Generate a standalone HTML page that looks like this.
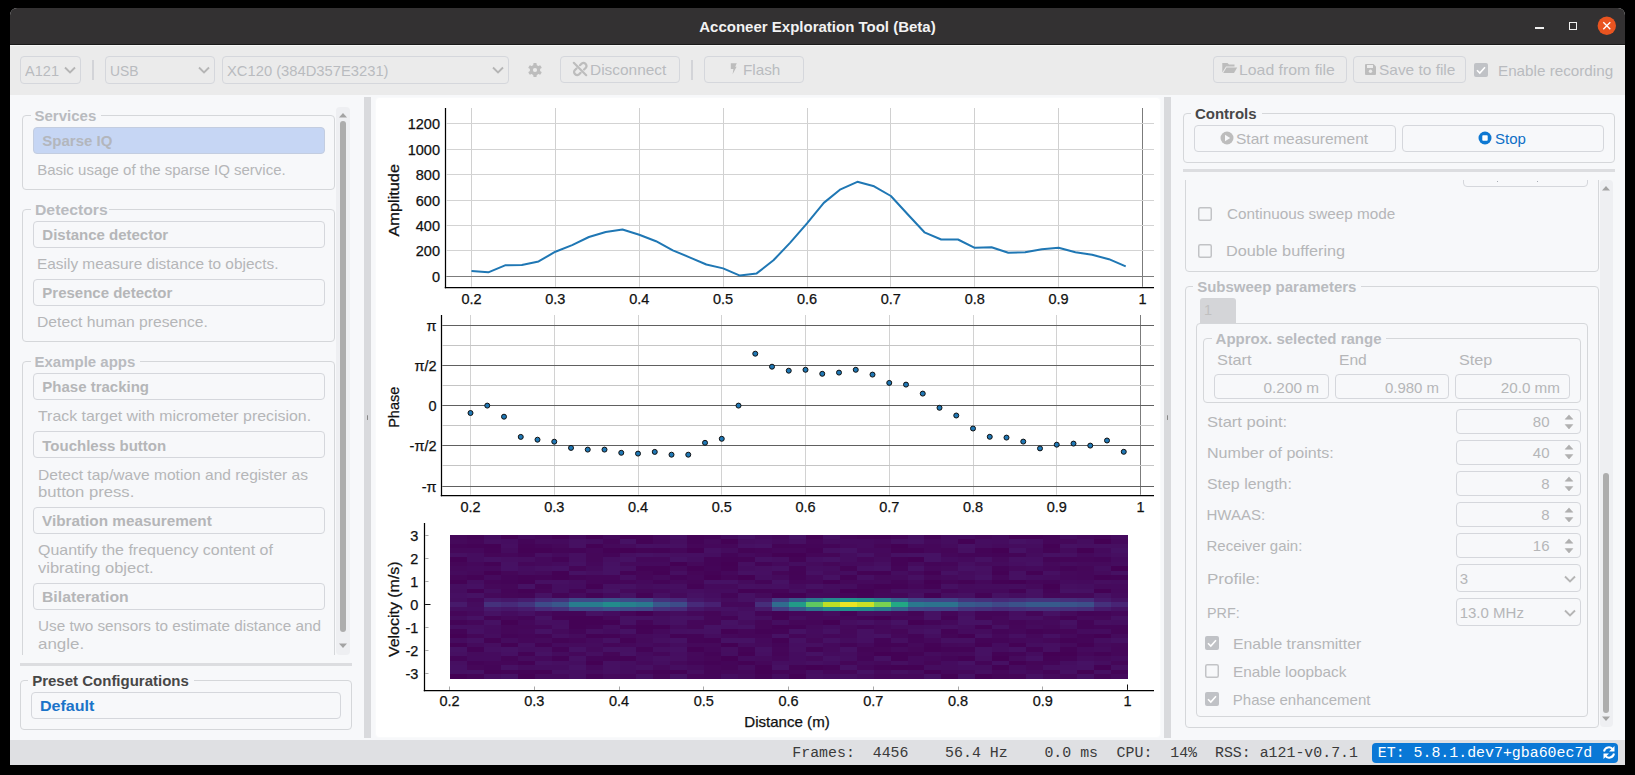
<!DOCTYPE html>
<html><head><meta charset="utf-8"><style>
html,body{margin:0;padding:0;width:1635px;height:775px;overflow:hidden;background:#000}
body>div,body>svg,body div div,body div svg{position:absolute}
body div div div{position:absolute}
</style></head><body>
<div style="left:10px;top:8px;width:1615px;height:757px;background:#f7f8fa;border-radius:7px 7px 0 0;overflow:hidden"></div>
<div style="left:10px;top:8px;width:1615px;height:36px;background:#333132;border-radius:7px 7px 0 0"></div>
<div style="left:10px;top:44px;width:1615px;height:1px;background:#1a1a1a"></div>
<div style="left:617.5px;width:400px;text-align:center;top:19.27px;font:bold 15px/15px 'Liberation Sans', sans-serif;color:#f2f2f2;white-space:pre;">Acconeer Exploration Tool (Beta)</div>
<div style="left:1535px;top:27.3px;width:9px;height:1.7px;background:#f0f0f0"></div>
<div style="left:1569px;top:22px;width:8px;height:8px;border:1.5px solid #f0f0f0;box-sizing:border-box"></div>
<svg style="left:1597px;top:16px" width="20" height="20" viewBox="0 0 20 20"><circle cx="9.8" cy="9.8" r="9.2" fill="#e95420"/><path d="M6.3 6.3L13.3 13.3M13.3 6.3L6.3 13.3" stroke="#fff" stroke-width="1.35"/></svg>
<div style="left:10px;top:45px;width:1615px;height:49.5px;background:#ebebeb;border-top:1px solid #f7f7f7;box-sizing:border-box"></div>
<div style="left:20px;top:56px;width:61px;height:28px;border:1px solid #d5d7dc;border-radius:4px;box-sizing:border-box;"></div>
<div style="left:24.6px;top:63.37px;font:normal 15px/15px 'Liberation Sans', sans-serif;color:#b9bbbf;white-space:pre;transform:scaleX(0.97);transform-origin:0 50%;">A121</div>
<svg style="left:62.7px;top:65px" width="14" height="10" viewBox="0 0 14 10"><path d="M2 2.5 L7 7.5 L12 2.5" fill="none" stroke="#b5b5b5" stroke-width="1.9"/></svg>
<div style="left:92px;top:60px;width:1.5px;height:20px;background:#d3d4d8"></div>
<div style="left:105px;top:56px;width:110px;height:28px;border:1px solid #d5d7dc;border-radius:4px;box-sizing:border-box;"></div>
<div style="left:110.3px;top:63.37px;font:normal 15px/15px 'Liberation Sans', sans-serif;color:#b9bbbf;white-space:pre;transform:scaleX(0.925);transform-origin:0 50%;">USB</div>
<svg style="left:196.5px;top:65px" width="14" height="10" viewBox="0 0 14 10"><path d="M2 2.5 L7 7.5 L12 2.5" fill="none" stroke="#b5b5b5" stroke-width="1.9"/></svg>
<div style="left:222px;top:56px;width:287px;height:28px;border:1px solid #d5d7dc;border-radius:4px;box-sizing:border-box;"></div>
<div style="left:227.3px;top:63.37px;font:normal 15px/15px 'Liberation Sans', sans-serif;color:#b9bbbf;white-space:pre;transform:scaleX(0.983);transform-origin:0 50%;">XC120 (384D357E3231)</div>
<svg style="left:490.5px;top:65px" width="14" height="10" viewBox="0 0 14 10"><path d="M2 2.5 L7 7.5 L12 2.5" fill="none" stroke="#b5b5b5" stroke-width="1.9"/></svg>
<svg style="left:527px;top:62px" width="16" height="16" viewBox="-8 -8 16 16"><g fill="#bdbdbd"><rect x="-1.7" y="-7" width="3.4" height="4" rx="0.8" transform="rotate(0)"/><rect x="-1.7" y="-7" width="3.4" height="4" rx="0.8" transform="rotate(60)"/><rect x="-1.7" y="-7" width="3.4" height="4" rx="0.8" transform="rotate(120)"/><rect x="-1.7" y="-7" width="3.4" height="4" rx="0.8" transform="rotate(180)"/><rect x="-1.7" y="-7" width="3.4" height="4" rx="0.8" transform="rotate(240)"/><rect x="-1.7" y="-7" width="3.4" height="4" rx="0.8" transform="rotate(300)"/><circle r="5.2"/></g><circle r="2.1" fill="#ebebeb"/></svg>
<div style="left:560px;top:56px;width:120px;height:27px;border:1px solid #d5d7dc;border-radius:4px;box-sizing:border-box;"></div>
<svg style="left:572px;top:61px" width="16" height="16" viewBox="0 0 16 16"><g fill="none" stroke="#bdbdbd" stroke-width="2.2" stroke-linecap="round"><path d="M4.5 7.5 L2.8 9.2 A3 3 0 0 0 7.0 13.4 L8.6 11.8"/><path d="M8.0 4.2 L9.6 2.6 A3 3 0 0 1 13.8 6.8 L12.1 8.5"/><path d="M1.8 1.8 L14.2 14.2"/></g></svg>
<div style="left:589.8px;top:62.47px;font:normal 15px/15px 'Liberation Sans', sans-serif;color:#b9bbbf;white-space:pre;transform:scaleX(1.028);transform-origin:0 50%;">Disconnect</div>
<div style="left:691.3px;top:60px;width:1.5px;height:20px;background:#d3d4d8"></div>
<div style="left:704px;top:56px;width:100px;height:27px;border:1px solid #d5d7dc;border-radius:4px;box-sizing:border-box;"></div>
<svg style="left:730px;top:62.5px" width="8" height="12" viewBox="0 0 8 12"><path d="M0.8 0.3 H6.8 L5.2 3.8 H6.6 L2.6 11.3 L3.4 6 H0.8 Z" fill="#bdbdbd"/></svg>
<div style="left:742.7px;top:62.47px;font:normal 15px/15px 'Liberation Sans', sans-serif;color:#b9bbbf;white-space:pre;transform:scaleX(1.018);transform-origin:0 50%;">Flash</div>
<div style="left:1213px;top:56px;width:134px;height:27px;border:1px solid #d5d7dc;border-radius:4px;box-sizing:border-box;"></div>
<svg style="left:1222px;top:62px" width="16" height="13" viewBox="0 0 16 13"><path d="M0.3 1 H5.5 L7 2.5 H12.5 V4.5 H4 L0.3 10.5 Z" fill="#bdbdbd"/><path d="M4.5 5.5 H15.2 L12 11 H1.2 Z" fill="#bdbdbd"/></svg>
<div style="left:1239.4px;top:62.47px;font:normal 15px/15px 'Liberation Sans', sans-serif;color:#b9bbbf;white-space:pre;transform:scaleX(1.055);transform-origin:0 50%;">Load from file</div>
<div style="left:1353px;top:56px;width:113px;height:27px;border:1px solid #d5d7dc;border-radius:4px;box-sizing:border-box;"></div>
<svg style="left:1364.5px;top:63.5px" width="11" height="11" viewBox="0 0 11 11"><path d="M0 1 A1 1 0 0 1 1 0 H8.5 L11 2.5 V10 A1 1 0 0 1 10 11 H1 A1 1 0 0 1 0 10 Z" fill="#bdbdbd"/><rect x="2" y="1" width="6" height="3" fill="#ebebeb"/><circle cx="5.5" cy="7.3" r="1.7" fill="#ebebeb"/></svg>
<div style="left:1379.3px;top:62.47px;font:normal 15px/15px 'Liberation Sans', sans-serif;color:#b9bbbf;white-space:pre;transform:scaleX(1.029);transform-origin:0 50%;">Save to file</div>
<svg style="left:1474px;top:63px" width="14" height="14" viewBox="0 0 14 14"><rect x="0" y="0" width="14" height="14" rx="2" fill="#c0c2c6"/><path d="M3 7.2 L5.8 10 L11 4.2" fill="none" stroke="#fff" stroke-width="1.6"/></svg>
<div style="left:1498.3px;top:62.97px;font:normal 15px/15px 'Liberation Sans', sans-serif;color:#b9bbbf;white-space:pre;transform:scaleX(1.015);transform-origin:0 50%;">Enable recording</div>
<div style="left:364px;top:97px;width:7px;height:641px;background:#d9dadd"></div>
<div style="left:1164px;top:97px;width:7px;height:641px;background:#d9dadd"></div>
<div style="left:367px;top:415px;width:1.2px;height:5px;background:#888;border-radius:1px"></div>
<div style="left:1167px;top:415px;width:1.2px;height:5px;background:#888;border-radius:1px"></div>
<div style="left:10px;top:739.5px;width:1615px;height:25.5px;background:#dfe0e3"></div>
<div style="left:792.3px;top:746.00px;font:normal 14.9px/14.9px 'Liberation Mono', monospace;color:#3a3a3a;white-space:pre;">Frames:  4456</div>
<div style="left:945.1px;top:746.00px;font:normal 14.9px/14.9px 'Liberation Mono', monospace;color:#3a3a3a;white-space:pre;">56.4 Hz</div>
<div style="left:1044.4px;top:746.00px;font:normal 14.9px/14.9px 'Liberation Mono', monospace;color:#3a3a3a;white-space:pre;">0.0 ms</div>
<div style="left:1116.6px;top:746.00px;font:normal 14.9px/14.9px 'Liberation Mono', monospace;color:#3a3a3a;white-space:pre;">CPU:  14%</div>
<div style="left:1215px;top:746.00px;font:normal 14.9px/14.9px 'Liberation Mono', monospace;color:#3a3a3a;white-space:pre;">RSS: a121-v0.7.1</div>
<div style="left:1372px;top:743px;width:246px;height:19.7px;background:#0a78d6;border-radius:4px"></div>
<div style="left:1377.8px;top:746.00px;font:normal 14.9px/14.9px 'Liberation Mono', monospace;color:#ffffff;white-space:pre;">ET: 5.8.1.dev7+gba60ec7d</div>
<svg style="left:1602px;top:745px" width="14" height="15" viewBox="0 0 14 15"><g fill="none" stroke="#fff" stroke-width="2"><path d="M2 6.5 A5 5 0 0 1 11 4.5"/><path d="M12 8.5 A5 5 0 0 1 3 10.5"/></g><path d="M12.5 1 V6.5 H7 Z" fill="#fff"/><path d="M1.5 14 V8.5 H7 Z" fill="#fff"/></svg>
<div style="left:10px;top:95px;width:354px;height:560px;overflow:hidden">
<div style="position:relative;left:-10px;top:-95px;width:1635px;height:775px">
<div style="left:22px;top:115px;width:313px;height:75px;border:1px solid #d5d7da;border-radius:4px;box-sizing:border-box;"></div>
<div style="left:30.5px;top:107px;height:16px;background:#f7f8fa;font:bold 15px/16px 'Liberation Sans', sans-serif;color:transparent;padding:0 5px 0 4px;white-space:pre">Services</div>
<div style="left:34.5px;top:108.27px;font:bold 15px/15px 'Liberation Sans', sans-serif;color:#b9bbbf;white-space:pre;">Services</div>
<div style="left:33px;top:127px;width:292px;height:27px;border:1px solid #d5d7dc;border-radius:4px;box-sizing:border-box;background:#c6d6f4;border-color:#c3cde0"></div>
<div style="left:42.3px;top:133.27px;font:bold 15px/15px 'Liberation Sans', sans-serif;color:#b3b6bd;white-space:pre;">Sparse IQ</div>
<div style="left:37.2px;top:162.47px;font:normal 15px/15px 'Liberation Sans', sans-serif;color:#b5b6b8;white-space:pre;">Basic usage of the sparse IQ service.</div>
<div style="left:22px;top:209px;width:313px;height:133px;border:1px solid #d5d7da;border-radius:4px;box-sizing:border-box;"></div>
<div style="left:30.5px;top:201px;height:16px;background:#f7f8fa;font:bold 15px/16px 'Liberation Sans', sans-serif;color:transparent;padding:0 5px 0 4px;white-space:pre">Detectors</div>
<div style="left:34.5px;top:202.27px;font:bold 15px/15px 'Liberation Sans', sans-serif;color:#b9bbbf;white-space:pre;transform:scaleX(1.05);transform-origin:0 50%;">Detectors</div>
<div style="left:33px;top:221px;width:292px;height:27px;border:1px solid #d5d7dc;border-radius:4px;box-sizing:border-box;"></div>
<div style="left:42.3px;top:227.27px;font:bold 15px/15px 'Liberation Sans', sans-serif;color:#b5b6b8;white-space:pre;">Distance detector</div>
<div style="left:37.4px;top:256.27px;font:normal 15px/15px 'Liberation Sans', sans-serif;color:#b5b6b8;white-space:pre;transform:scaleX(1.027);transform-origin:0 50%;">Easily measure distance to objects.</div>
<div style="left:33px;top:279px;width:292px;height:27px;border:1px solid #d5d7dc;border-radius:4px;box-sizing:border-box;"></div>
<div style="left:42.3px;top:285.27px;font:bold 15px/15px 'Liberation Sans', sans-serif;color:#b5b6b8;white-space:pre;">Presence detector</div>
<div style="left:37.4px;top:314.37px;font:normal 15px/15px 'Liberation Sans', sans-serif;color:#b5b6b8;white-space:pre;transform:scaleX(1.046);transform-origin:0 50%;">Detect human presence.</div>
<div style="left:22px;top:361px;width:313px;height:321px;border:1px solid #d5d7da;border-radius:4px;box-sizing:border-box;"></div>
<div style="left:30.5px;top:353px;height:16px;background:#f7f8fa;font:bold 15px/16px 'Liberation Sans', sans-serif;color:transparent;padding:0 5px 0 4px;white-space:pre">Example apps</div>
<div style="left:34.5px;top:354.27px;font:bold 15px/15px 'Liberation Sans', sans-serif;color:#b9bbbf;white-space:pre;">Example apps</div>
<div style="left:33px;top:373px;width:292px;height:27px;border:1px solid #d5d7dc;border-radius:4px;box-sizing:border-box;"></div>
<div style="left:42.3px;top:379.47px;font:bold 15px/15px 'Liberation Sans', sans-serif;color:#b5b6b8;white-space:pre;">Phase tracking</div>
<div style="left:37.6px;top:408.47px;font:normal 15px/15px 'Liberation Sans', sans-serif;color:#b5b6b8;white-space:pre;transform:scaleX(1.059);transform-origin:0 50%;">Track target with micrometer precision.</div>
<div style="left:33px;top:431px;width:292px;height:27px;border:1px solid #d5d7dc;border-radius:4px;box-sizing:border-box;"></div>
<div style="left:42.3px;top:437.57px;font:bold 15px/15px 'Liberation Sans', sans-serif;color:#b5b6b8;white-space:pre;">Touchless button</div>
<div style="left:37.6px;top:466.57px;font:normal 15px/15px 'Liberation Sans', sans-serif;color:#b5b6b8;white-space:pre;transform:scaleX(1.038);transform-origin:0 50%;">Detect tap/wave motion and register as</div>
<div style="left:37.6px;top:484.47px;font:normal 15px/15px 'Liberation Sans', sans-serif;color:#b5b6b8;white-space:pre;transform:scaleX(1.11);transform-origin:0 50%;">button press.</div>
<div style="left:33px;top:507px;width:292px;height:27px;border:1px solid #d5d7dc;border-radius:4px;box-sizing:border-box;"></div>
<div style="left:42.3px;top:513.37px;font:bold 15px/15px 'Liberation Sans', sans-serif;color:#b5b6b8;white-space:pre;transform:scaleX(1.02);transform-origin:0 50%;">Vibration measurement</div>
<div style="left:37.6px;top:542.37px;font:normal 15px/15px 'Liberation Sans', sans-serif;color:#b5b6b8;white-space:pre;transform:scaleX(1.063);transform-origin:0 50%;">Quantify the frequency content of</div>
<div style="left:37.6px;top:560.27px;font:normal 15px/15px 'Liberation Sans', sans-serif;color:#b5b6b8;white-space:pre;transform:scaleX(1.1);transform-origin:0 50%;">vibrating object.</div>
<div style="left:33px;top:583px;width:292px;height:27px;border:1px solid #d5d7dc;border-radius:4px;box-sizing:border-box;"></div>
<div style="left:42.3px;top:589.17px;font:bold 15px/15px 'Liberation Sans', sans-serif;color:#b5b6b8;white-space:pre;transform:scaleX(1.05);transform-origin:0 50%;">Bilateration</div>
<div style="left:37.6px;top:618.17px;font:normal 15px/15px 'Liberation Sans', sans-serif;color:#b5b6b8;white-space:pre;transform:scaleX(1.019);transform-origin:0 50%;">Use two sensors to estimate distance and</div>
<div style="left:37.6px;top:636.07px;font:normal 15px/15px 'Liberation Sans', sans-serif;color:#b5b6b8;white-space:pre;transform:scaleX(1.13);transform-origin:0 50%;">angle.</div>
</div></div>
<div style="left:336px;top:107px;width:13.5px;height:548px;background:#eeeff2;border-radius:4px"></div>
<svg style="left:337.8px;top:111px" width="10" height="8" viewBox="0 0 10 8"><path d="M1 6.5 L5 2 L9 6.5 Z" fill="#a3a3a3"/></svg>
<div style="left:340px;top:121px;width:5.8px;height:510.5px;background:#adadad;border-radius:3px"></div>
<svg style="left:338px;top:642px" width="10" height="8" viewBox="0 0 10 8"><path d="M1 1.5 L5 6 L9 1.5 Z" fill="#a3a3a3"/></svg>
<div style="left:20px;top:663px;width:332px;height:2.5px;background:#dcdde0"></div>
<div style="left:20px;top:680px;width:332px;height:50px;border:1px solid #d5d7da;border-radius:4px;box-sizing:border-box;"></div>
<div style="left:28.200000000000003px;top:672px;height:16px;background:#f7f8fa;font:bold 15px/16px 'Liberation Sans', sans-serif;color:transparent;padding:0 5px 0 4px;white-space:pre">Preset Configurations</div>
<div style="left:32.2px;top:673.27px;font:bold 15px/15px 'Liberation Sans', sans-serif;color:#474747;white-space:pre;">Preset Configurations</div>
<div style="left:31px;top:692px;width:310px;height:27px;border:1px solid #d5d7dc;border-radius:4px;box-sizing:border-box;"></div>
<div style="left:40.4px;top:698.27px;font:bold 15px/15px 'Liberation Sans', sans-serif;color:#1a73c9;white-space:pre;transform:scaleX(1.07);transform-origin:0 50%;">Default</div>
<div style="left:1183px;top:113px;width:432px;height:50px;border:1px solid #d5d7da;border-radius:4px;box-sizing:border-box;"></div>
<div style="left:1190.9px;top:105px;height:16px;background:#f7f8fa;font:bold 15px/16px 'Liberation Sans', sans-serif;color:transparent;padding:0 5px 0 4px;white-space:pre">Controls</div>
<div style="left:1194.9px;top:106.27px;font:bold 15px/15px 'Liberation Sans', sans-serif;color:#474747;white-space:pre;">Controls</div>
<div style="left:1194px;top:125px;width:202px;height:27px;border:1px solid #d5d7dc;border-radius:4px;box-sizing:border-box;"></div>
<svg style="left:1219.5px;top:131px" width="14" height="14" viewBox="0 0 14 14"><circle cx="7" cy="7" r="6.5" fill="#bdbdbd"/><path d="M5 3.8 L10.2 7 L5 10.2 Z" fill="#f7f8fa"/></svg>
<div style="left:1235.5px;top:131.27px;font:normal 15px/15px 'Liberation Sans', sans-serif;color:#b5b6b8;white-space:pre;transform:scaleX(1.036);transform-origin:0 50%;">Start measurement</div>
<div style="left:1402px;top:125px;width:202px;height:27px;border:1px solid #d5d7dc;border-radius:4px;box-sizing:border-box;"></div>
<svg style="left:1477.5px;top:130.5px" width="14" height="14" viewBox="0 0 14 14"><circle cx="7" cy="7" r="6.5" fill="#0e78d2"/><rect x="4.3" y="4.3" width="5.4" height="5.4" rx="0.8" fill="#fff"/></svg>
<div style="left:1495px;top:131.27px;font:normal 15px/15px 'Liberation Sans', sans-serif;color:#0e6fc6;white-space:pre;">Stop</div>
<div style="left:1183px;top:169px;width:432px;height:3px;background:#dcdde0"></div>
<div style="left:1171px;top:180px;width:428px;height:548px;overflow:hidden">
<div style="position:relative;left:-1171px;top:-180px;width:1635px;height:775px">
<div style="left:1185px;top:100px;width:414px;height:171.5px;border:1px solid #d5d7da;border-radius:4px;box-sizing:border-box"></div>
<div style="left:1497px;top:181px;width:1px;height:1px;background:#a8acb4"></div>
<div style="left:1537px;top:181px;width:1px;height:1px;background:#a8acb4"></div>
<div style="left:1463px;top:150px;width:125px;height:37px;border:1px solid #d5d7dc;border-radius:4px;box-sizing:border-box;"></div>
<svg style="left:1198px;top:206.5px" width="14" height="14" viewBox="0 0 14 14"><rect x="0.75" y="0.75" width="12.5" height="12.5" rx="1.5" fill="none" stroke="#c2c3c6" stroke-width="1.5"/></svg>
<div style="left:1226.6px;top:206.47px;font:normal 15px/15px 'Liberation Sans', sans-serif;color:#b5b6b8;white-space:pre;transform:scaleX(1.019);transform-origin:0 50%;">Continuous sweep mode</div>
<svg style="left:1198px;top:243.5px" width="14" height="14" viewBox="0 0 14 14"><rect x="0.75" y="0.75" width="12.5" height="12.5" rx="1.5" fill="none" stroke="#c2c3c6" stroke-width="1.5"/></svg>
<div style="left:1225.9px;top:243.27px;font:normal 15px/15px 'Liberation Sans', sans-serif;color:#b5b6b8;white-space:pre;transform:scaleX(1.085);transform-origin:0 50%;">Double buffering</div>
<div style="left:1185px;top:286px;width:414px;height:442px;border:1px solid #d5d7da;border-radius:4px;box-sizing:border-box;"></div>
<div style="left:1193.2px;top:278px;height:16px;background:#f7f8fa;font:bold 15px/16px 'Liberation Sans', sans-serif;color:transparent;padding:0 5px 0 4px;white-space:pre">Subsweep parameters</div>
<div style="left:1197.2px;top:279.27px;font:bold 15px/15px 'Liberation Sans', sans-serif;color:#b9bbbf;white-space:pre;">Subsweep parameters</div>
<div style="left:1200px;top:298.1px;width:36px;height:25.5px;background:#d4d5d8;border-radius:3px 3px 0 0"></div>
<div style="left:1204px;top:303.01px;font:normal 14.5px/14.5px 'Liberation Sans', sans-serif;color:#c0c0c0;white-space:pre;">1</div>
<div style="left:1196px;top:323px;width:392px;height:394px;border:1px solid #d5d7da;border-radius:4px;box-sizing:border-box"></div>
<div style="left:1203px;top:338px;width:378px;height:65px;border:1px solid #d5d7da;border-radius:4px;box-sizing:border-box;"></div>
<div style="left:1211.6px;top:330px;height:16px;background:#f7f8fa;font:bold 15px/16px 'Liberation Sans', sans-serif;color:transparent;padding:0 5px 0 4px;white-space:pre">Approx. selected range</div>
<div style="left:1215.6px;top:331.27px;font:bold 15px/15px 'Liberation Sans', sans-serif;color:#b9bbbf;white-space:pre;">Approx. selected range</div>
<div style="left:1217.2px;top:351.77px;font:normal 15px/15px 'Liberation Sans', sans-serif;color:#b5b6b8;white-space:pre;transform:scaleX(1.093);transform-origin:0 50%;">Start</div>
<div style="left:1338.8px;top:351.77px;font:normal 15px/15px 'Liberation Sans', sans-serif;color:#b5b6b8;white-space:pre;transform:scaleX(1.042);transform-origin:0 50%;">End</div>
<div style="left:1458.5px;top:351.77px;font:normal 15px/15px 'Liberation Sans', sans-serif;color:#b5b6b8;white-space:pre;transform:scaleX(1.079);transform-origin:0 50%;">Step</div>
<div style="left:1214px;top:374px;width:115px;height:25px;border:1px solid #d5d7dc;border-radius:4px;box-sizing:border-box;"></div>
<div style="left:1209.3px;width:110px;text-align:right;top:379.77px;font:normal 15px/15px 'Liberation Sans', sans-serif;color:#b5b6b8;white-space:pre;transform:scaleX(1.023);transform-origin:100% 50%;">0.200 m</div>
<div style="left:1335px;top:374px;width:114px;height:25px;border:1px solid #d5d7dc;border-radius:4px;box-sizing:border-box;"></div>
<div style="left:1329.1px;width:110px;text-align:right;top:379.77px;font:normal 15px/15px 'Liberation Sans', sans-serif;color:#b5b6b8;white-space:pre;">0.980 m</div>
<div style="left:1455px;top:374px;width:115px;height:25px;border:1px solid #d5d7dc;border-radius:4px;box-sizing:border-box;"></div>
<div style="left:1450.4px;width:110px;text-align:right;top:379.77px;font:normal 15px/15px 'Liberation Sans', sans-serif;color:#b5b6b8;white-space:pre;transform:scaleX(1.016);transform-origin:100% 50%;">20.0 mm</div>
<div style="left:1206.5px;top:414.32px;font:normal 15px/15px 'Liberation Sans', sans-serif;color:#b5b6b8;white-space:pre;transform:scaleX(1.104);transform-origin:0 50%;">Start point:</div>
<div style="left:1456px;top:409px;width:125px;height:25px;border:1px solid #d5d7dc;border-radius:4px;box-sizing:border-box;"></div>
<div style="left:1469.5px;width:80px;text-align:right;top:414.32px;font:normal 15px/15px 'Liberation Sans', sans-serif;color:#b5b6b8;white-space:pre;">80</div>
<svg style="left:1564px;top:413.54999999999995px" width="10" height="16" viewBox="0 0 10 16"><path d="M1.2 5.2 L5 0.9 L8.8 5.2 Z M1.2 10.6 L5 15 L8.8 10.6 Z" fill="#b0b0b0" stroke="#b0b0b0" stroke-width="0.6" stroke-linejoin="round"/></svg>
<div style="left:1206.5px;top:445.07px;font:normal 15px/15px 'Liberation Sans', sans-serif;color:#b5b6b8;white-space:pre;transform:scaleX(1.07);transform-origin:0 50%;">Number of points:</div>
<div style="left:1456px;top:440px;width:125px;height:25px;border:1px solid #d5d7dc;border-radius:4px;box-sizing:border-box;"></div>
<div style="left:1469.5px;width:80px;text-align:right;top:445.07px;font:normal 15px/15px 'Liberation Sans', sans-serif;color:#b5b6b8;white-space:pre;">40</div>
<svg style="left:1564px;top:444.29999999999995px" width="10" height="16" viewBox="0 0 10 16"><path d="M1.2 5.2 L5 0.9 L8.8 5.2 Z M1.2 10.6 L5 15 L8.8 10.6 Z" fill="#b0b0b0" stroke="#b0b0b0" stroke-width="0.6" stroke-linejoin="round"/></svg>
<div style="left:1206.5px;top:476.42px;font:normal 15px/15px 'Liberation Sans', sans-serif;color:#b5b6b8;white-space:pre;transform:scaleX(1.06);transform-origin:0 50%;">Step length:</div>
<div style="left:1456px;top:471px;width:125px;height:25px;border:1px solid #d5d7dc;border-radius:4px;box-sizing:border-box;"></div>
<div style="left:1469.5px;width:80px;text-align:right;top:476.42px;font:normal 15px/15px 'Liberation Sans', sans-serif;color:#b5b6b8;white-space:pre;">8</div>
<svg style="left:1564px;top:475.65px" width="10" height="16" viewBox="0 0 10 16"><path d="M1.2 5.2 L5 0.9 L8.8 5.2 Z M1.2 10.6 L5 15 L8.8 10.6 Z" fill="#b0b0b0" stroke="#b0b0b0" stroke-width="0.6" stroke-linejoin="round"/></svg>
<div style="left:1206.5px;top:507.32px;font:normal 15px/15px 'Liberation Sans', sans-serif;color:#b5b6b8;white-space:pre;">HWAAS:</div>
<div style="left:1456px;top:502px;width:125px;height:25px;border:1px solid #d5d7dc;border-radius:4px;box-sizing:border-box;"></div>
<div style="left:1469.5px;width:80px;text-align:right;top:507.32px;font:normal 15px/15px 'Liberation Sans', sans-serif;color:#b5b6b8;white-space:pre;">8</div>
<svg style="left:1564px;top:506.54999999999995px" width="10" height="16" viewBox="0 0 10 16"><path d="M1.2 5.2 L5 0.9 L8.8 5.2 Z M1.2 10.6 L5 15 L8.8 10.6 Z" fill="#b0b0b0" stroke="#b0b0b0" stroke-width="0.6" stroke-linejoin="round"/></svg>
<div style="left:1206.5px;top:538.37px;font:normal 15px/15px 'Liberation Sans', sans-serif;color:#b5b6b8;white-space:pre;">Receiver gain:</div>
<div style="left:1456px;top:533px;width:125px;height:25px;border:1px solid #d5d7dc;border-radius:4px;box-sizing:border-box;"></div>
<div style="left:1469.5px;width:80px;text-align:right;top:538.37px;font:normal 15px/15px 'Liberation Sans', sans-serif;color:#b5b6b8;white-space:pre;">16</div>
<svg style="left:1564px;top:537.6px" width="10" height="16" viewBox="0 0 10 16"><path d="M1.2 5.2 L5 0.9 L8.8 5.2 Z M1.2 10.6 L5 15 L8.8 10.6 Z" fill="#b0b0b0" stroke="#b0b0b0" stroke-width="0.6" stroke-linejoin="round"/></svg>
<div style="left:1206.5px;top:570.92px;font:normal 15px/15px 'Liberation Sans', sans-serif;color:#b5b6b8;white-space:pre;transform:scaleX(1.135);transform-origin:0 50%;">Profile:</div>
<div style="left:1456px;top:564px;width:125px;height:28px;border:1px solid #d5d7dc;border-radius:4px;box-sizing:border-box;"></div>
<div style="left:1459.7px;top:570.92px;font:normal 15px/15px 'Liberation Sans', sans-serif;color:#b5b6b8;white-space:pre;">3</div>
<svg style="left:1562.5px;top:573.65px" width="14" height="10" viewBox="0 0 14 10"><path d="M2 2.5 L7 7.5 L12 2.5" fill="none" stroke="#b5b5b5" stroke-width="1.9"/></svg>
<div style="left:1206.5px;top:604.87px;font:normal 15px/15px 'Liberation Sans', sans-serif;color:#b5b6b8;white-space:pre;transform:scaleX(0.955);transform-origin:0 50%;">PRF:</div>
<div style="left:1456px;top:598px;width:125px;height:28px;border:1px solid #d5d7dc;border-radius:4px;box-sizing:border-box;"></div>
<div style="left:1459.7px;top:604.87px;font:normal 15px/15px 'Liberation Sans', sans-serif;color:#b5b6b8;white-space:pre;">13.0 MHz</div>
<svg style="left:1562.5px;top:607.6px" width="14" height="10" viewBox="0 0 14 10"><path d="M2 2.5 L7 7.5 L12 2.5" fill="none" stroke="#b5b5b5" stroke-width="1.9"/></svg>
<svg style="left:1205px;top:635.7px" width="14" height="14" viewBox="0 0 14 14"><rect x="0" y="0" width="14" height="14" rx="2" fill="#c0c2c6"/><path d="M3 7.2 L5.8 10 L11 4.2" fill="none" stroke="#fff" stroke-width="1.6"/></svg>
<div style="left:1232.8px;top:636.27px;font:normal 15px/15px 'Liberation Sans', sans-serif;color:#b5b6b8;white-space:pre;transform:scaleX(1.053);transform-origin:0 50%;">Enable transmitter</div>
<svg style="left:1205px;top:664.3px" width="14" height="14" viewBox="0 0 14 14"><rect x="0.75" y="0.75" width="12.5" height="12.5" rx="1.5" fill="none" stroke="#c2c3c6" stroke-width="1.5"/></svg>
<div style="left:1232.8px;top:664.07px;font:normal 15px/15px 'Liberation Sans', sans-serif;color:#b5b6b8;white-space:pre;transform:scaleX(1.023);transform-origin:0 50%;">Enable loopback</div>
<svg style="left:1205px;top:691.7px" width="14" height="14" viewBox="0 0 14 14"><rect x="0" y="0" width="14" height="14" rx="2" fill="#c0c2c6"/><path d="M3 7.2 L5.8 10 L11 4.2" fill="none" stroke="#fff" stroke-width="1.6"/></svg>
<div style="left:1232.8px;top:692.27px;font:normal 15px/15px 'Liberation Sans', sans-serif;color:#b5b6b8;white-space:pre;">Phase enhancement</div>
</div></div>
<div style="left:1599.6px;top:180px;width:13.4px;height:547.3px;background:#eeeff2;border-radius:4px"></div>
<svg style="left:1600.5px;top:184px" width="10" height="8" viewBox="0 0 10 8"><path d="M1 6.5 L5 2 L9 6.5 Z" fill="#a3a3a3"/></svg>
<div style="left:1603px;top:472.6px;width:6.4px;height:240.3px;background:#adadad;border-radius:3px"></div>
<svg style="left:1600.5px;top:715px" width="10" height="8" viewBox="0 0 10 8"><path d="M1 1.5 L5 6 L9 1.5 Z" fill="#a3a3a3"/></svg>
<div style="left:374.8px;top:96.5px;width:786px;height:641.4px;background:#ffffff;border:1px solid #f9fafb;border-radius:4px;box-sizing:border-box"></div>
<svg style="left:0;top:0" width="1635" height="775" viewBox="0 0 1635 775"><line x1="445.5" y1="108" x2="445.5" y2="288.25" stroke="#000" stroke-width="1.25"/><line x1="444.75" y1="287.5" x2="1154" y2="287.5" stroke="#000" stroke-width="1.25"/><line x1="471.50" y1="108" x2="471.50" y2="286.75" stroke="#d0d0d0" stroke-width="1"/><line x1="555.50" y1="108" x2="555.50" y2="286.75" stroke="#d0d0d0" stroke-width="1"/><line x1="639.50" y1="108" x2="639.50" y2="286.75" stroke="#d0d0d0" stroke-width="1"/><line x1="723.50" y1="108" x2="723.50" y2="286.75" stroke="#d0d0d0" stroke-width="1"/><line x1="807.50" y1="108" x2="807.50" y2="286.75" stroke="#d0d0d0" stroke-width="1"/><line x1="890.50" y1="108" x2="890.50" y2="286.75" stroke="#d0d0d0" stroke-width="1"/><line x1="974.50" y1="108" x2="974.50" y2="286.75" stroke="#d0d0d0" stroke-width="1"/><line x1="1058.50" y1="108" x2="1058.50" y2="286.75" stroke="#d0d0d0" stroke-width="1"/><line x1="1142.50" y1="108" x2="1142.50" y2="286.75" stroke="#7b7b7b" stroke-width="1"/><line x1="446.25" y1="276.5" x2="1154" y2="276.5" stroke="#7c7c7c" stroke-width="1"/><line x1="446.25" y1="250.5" x2="1154" y2="250.5" stroke="#d3d3d3" stroke-width="1"/><line x1="446.25" y1="225.5" x2="1154" y2="225.5" stroke="#d3d3d3" stroke-width="1"/><line x1="446.25" y1="200.5" x2="1154" y2="200.5" stroke="#d3d3d3" stroke-width="1"/><line x1="446.25" y1="174.5" x2="1154" y2="174.5" stroke="#d3d3d3" stroke-width="1"/><line x1="446.25" y1="149.5" x2="1154" y2="149.5" stroke="#d3d3d3" stroke-width="1"/><line x1="446.25" y1="123.5" x2="1154" y2="123.5" stroke="#d3d3d3" stroke-width="1"/><polyline points="471.50,270.90 488.27,272.30 505.05,265.30 521.83,265.00 538.60,261.40 555.38,251.70 572.15,245.10 588.92,237.00 605.70,232.00 622.48,229.50 639.25,234.80 656.03,241.20 672.80,250.30 689.58,257.30 706.35,264.50 723.12,268.40 739.90,275.60 756.67,273.40 773.45,260.30 790.23,242.60 807.00,223.40 823.78,202.90 840.55,189.30 857.33,181.80 874.10,186.30 890.88,196.00 907.65,214.30 924.43,232.30 941.20,239.50 957.98,239.50 974.75,247.80 991.53,247.30 1008.30,252.80 1025.08,252.30 1041.85,249.20 1058.62,247.80 1075.40,252.30 1092.18,254.80 1108.95,259.20 1125.73,266.40" fill="none" stroke="#1f77b4" stroke-width="2" stroke-linejoin="round"/><line x1="441.5" y1="315" x2="441.5" y2="496.25" stroke="#000" stroke-width="1.25"/><line x1="440.75" y1="495.5" x2="1154" y2="495.5" stroke="#000" stroke-width="1.25"/><line x1="470.50" y1="315" x2="470.50" y2="494.75" stroke="#d2d2d2" stroke-width="1"/><line x1="554.50" y1="315" x2="554.50" y2="494.75" stroke="#d2d2d2" stroke-width="1"/><line x1="638.50" y1="315" x2="638.50" y2="494.75" stroke="#d2d2d2" stroke-width="1"/><line x1="721.50" y1="315" x2="721.50" y2="494.75" stroke="#d2d2d2" stroke-width="1"/><line x1="805.50" y1="315" x2="805.50" y2="494.75" stroke="#d2d2d2" stroke-width="1"/><line x1="889.50" y1="315" x2="889.50" y2="494.75" stroke="#d2d2d2" stroke-width="1"/><line x1="973.50" y1="315" x2="973.50" y2="494.75" stroke="#d2d2d2" stroke-width="1"/><line x1="1056.50" y1="315" x2="1056.50" y2="494.75" stroke="#d2d2d2" stroke-width="1"/><line x1="1140.50" y1="315" x2="1140.50" y2="494.75" stroke="#7c7c7c" stroke-width="1"/><line x1="442.25" y1="325.5" x2="1154" y2="325.5" stroke="#606060" stroke-width="1"/><line x1="442.25" y1="345.5" x2="1154" y2="345.5" stroke="#c5c5c5" stroke-width="1"/><line x1="442.25" y1="365.5" x2="1154" y2="365.5" stroke="#606060" stroke-width="1"/><line x1="442.25" y1="385.5" x2="1154" y2="385.5" stroke="#c5c5c5" stroke-width="1"/><line x1="442.25" y1="405.5" x2="1154" y2="405.5" stroke="#606060" stroke-width="1"/><line x1="442.25" y1="425.5" x2="1154" y2="425.5" stroke="#c5c5c5" stroke-width="1"/><line x1="442.25" y1="445.5" x2="1154" y2="445.5" stroke="#606060" stroke-width="1"/><line x1="442.25" y1="465.5" x2="1154" y2="465.5" stroke="#c5c5c5" stroke-width="1"/><line x1="442.25" y1="486.5" x2="1154" y2="486.5" stroke="#606060" stroke-width="1"/><circle cx="470.50" cy="413.00" r="2.5" fill="#1f77b4" stroke="#111" stroke-width="1"/><circle cx="487.25" cy="405.60" r="2.5" fill="#1f77b4" stroke="#111" stroke-width="1"/><circle cx="504.00" cy="416.70" r="2.5" fill="#1f77b4" stroke="#111" stroke-width="1"/><circle cx="520.75" cy="436.90" r="2.5" fill="#1f77b4" stroke="#111" stroke-width="1"/><circle cx="537.50" cy="439.70" r="2.5" fill="#1f77b4" stroke="#111" stroke-width="1"/><circle cx="554.25" cy="441.70" r="2.5" fill="#1f77b4" stroke="#111" stroke-width="1"/><circle cx="571.00" cy="447.90" r="2.5" fill="#1f77b4" stroke="#111" stroke-width="1"/><circle cx="587.75" cy="449.60" r="2.5" fill="#1f77b4" stroke="#111" stroke-width="1"/><circle cx="604.50" cy="449.60" r="2.5" fill="#1f77b4" stroke="#111" stroke-width="1"/><circle cx="621.25" cy="452.80" r="2.5" fill="#1f77b4" stroke="#111" stroke-width="1"/><circle cx="638.00" cy="453.60" r="2.5" fill="#1f77b4" stroke="#111" stroke-width="1"/><circle cx="654.75" cy="451.90" r="2.5" fill="#1f77b4" stroke="#111" stroke-width="1"/><circle cx="671.50" cy="454.70" r="2.5" fill="#1f77b4" stroke="#111" stroke-width="1"/><circle cx="688.25" cy="454.70" r="2.5" fill="#1f77b4" stroke="#111" stroke-width="1"/><circle cx="705.00" cy="442.80" r="2.5" fill="#1f77b4" stroke="#111" stroke-width="1"/><circle cx="721.75" cy="438.80" r="2.5" fill="#1f77b4" stroke="#111" stroke-width="1"/><circle cx="738.50" cy="405.60" r="2.5" fill="#1f77b4" stroke="#111" stroke-width="1"/><circle cx="755.25" cy="353.70" r="2.5" fill="#1f77b4" stroke="#111" stroke-width="1"/><circle cx="772.00" cy="366.70" r="2.5" fill="#1f77b4" stroke="#111" stroke-width="1"/><circle cx="788.75" cy="370.70" r="2.5" fill="#1f77b4" stroke="#111" stroke-width="1"/><circle cx="805.50" cy="369.80" r="2.5" fill="#1f77b4" stroke="#111" stroke-width="1"/><circle cx="822.25" cy="373.80" r="2.5" fill="#1f77b4" stroke="#111" stroke-width="1"/><circle cx="839.00" cy="372.60" r="2.5" fill="#1f77b4" stroke="#111" stroke-width="1"/><circle cx="855.75" cy="369.80" r="2.5" fill="#1f77b4" stroke="#111" stroke-width="1"/><circle cx="872.50" cy="374.60" r="2.5" fill="#1f77b4" stroke="#111" stroke-width="1"/><circle cx="889.25" cy="382.90" r="2.5" fill="#1f77b4" stroke="#111" stroke-width="1"/><circle cx="906.00" cy="384.60" r="2.5" fill="#1f77b4" stroke="#111" stroke-width="1"/><circle cx="922.75" cy="393.60" r="2.5" fill="#1f77b4" stroke="#111" stroke-width="1"/><circle cx="939.50" cy="407.80" r="2.5" fill="#1f77b4" stroke="#111" stroke-width="1"/><circle cx="956.25" cy="415.50" r="2.5" fill="#1f77b4" stroke="#111" stroke-width="1"/><circle cx="973.00" cy="428.50" r="2.5" fill="#1f77b4" stroke="#111" stroke-width="1"/><circle cx="989.75" cy="436.80" r="2.5" fill="#1f77b4" stroke="#111" stroke-width="1"/><circle cx="1006.50" cy="437.60" r="2.5" fill="#1f77b4" stroke="#111" stroke-width="1"/><circle cx="1023.25" cy="441.60" r="2.5" fill="#1f77b4" stroke="#111" stroke-width="1"/><circle cx="1040.00" cy="448.40" r="2.5" fill="#1f77b4" stroke="#111" stroke-width="1"/><circle cx="1056.75" cy="444.70" r="2.5" fill="#1f77b4" stroke="#111" stroke-width="1"/><circle cx="1073.50" cy="443.60" r="2.5" fill="#1f77b4" stroke="#111" stroke-width="1"/><circle cx="1090.25" cy="445.60" r="2.5" fill="#1f77b4" stroke="#111" stroke-width="1"/><circle cx="1107.00" cy="440.50" r="2.5" fill="#1f77b4" stroke="#111" stroke-width="1"/><circle cx="1123.75" cy="451.80" r="2.5" fill="#1f77b4" stroke="#111" stroke-width="1"/><line x1="424.5" y1="523" x2="424.5" y2="691.25" stroke="#000" stroke-width="1.25"/><line x1="423.75" y1="690.5" x2="1154" y2="690.5" stroke="#000" stroke-width="1.25"/><rect x="450.1" y="535.0" width="677.6999999999999" height="143.5" fill="#46106c"/><g shape-rendering="crispEdges"><rect x="450.10" y="535.00" width="17.24" height="4.78" fill="#450759"/><rect x="467.04" y="535.00" width="17.24" height="4.78" fill="#440456"/><rect x="483.99" y="535.00" width="17.24" height="4.78" fill="#450c5f"/><rect x="500.93" y="535.00" width="17.24" height="4.78" fill="#440255"/><rect x="517.87" y="535.00" width="17.24" height="4.78" fill="#450a5d"/><rect x="534.81" y="535.00" width="17.24" height="4.78" fill="#45075a"/><rect x="551.75" y="535.00" width="17.24" height="4.78" fill="#440255"/><rect x="568.70" y="535.00" width="17.24" height="4.78" fill="#450a5c"/><rect x="585.64" y="535.00" width="17.24" height="4.78" fill="#440255"/><rect x="602.58" y="535.00" width="17.24" height="4.78" fill="#45095b"/><rect x="619.52" y="535.00" width="17.24" height="4.78" fill="#440255"/><rect x="636.47" y="535.00" width="17.24" height="4.78" fill="#440355"/><rect x="653.41" y="535.00" width="17.24" height="4.78" fill="#45085b"/><rect x="670.35" y="535.00" width="17.24" height="4.78" fill="#460f62"/><rect x="687.30" y="535.00" width="17.24" height="4.78" fill="#440356"/><rect x="704.24" y="535.00" width="17.24" height="4.78" fill="#440558"/><rect x="721.18" y="535.00" width="17.24" height="4.78" fill="#450c5e"/><rect x="738.12" y="535.00" width="17.24" height="4.78" fill="#461264"/><rect x="755.07" y="535.00" width="17.24" height="4.78" fill="#450b5e"/><rect x="772.01" y="535.00" width="17.24" height="4.78" fill="#45085b"/><rect x="788.95" y="535.00" width="17.24" height="4.78" fill="#461264"/><rect x="805.89" y="535.00" width="17.24" height="4.78" fill="#440255"/><rect x="822.84" y="535.00" width="17.24" height="4.78" fill="#461062"/><rect x="839.78" y="535.00" width="17.24" height="4.78" fill="#450659"/><rect x="856.72" y="535.00" width="17.24" height="4.78" fill="#440456"/><rect x="873.66" y="535.00" width="17.24" height="4.78" fill="#440356"/><rect x="890.61" y="535.00" width="17.24" height="4.78" fill="#450659"/><rect x="907.55" y="535.00" width="17.24" height="4.78" fill="#460f61"/><rect x="924.49" y="535.00" width="17.24" height="4.78" fill="#440457"/><rect x="941.43" y="535.00" width="17.24" height="4.78" fill="#450b5e"/><rect x="958.38" y="535.00" width="17.24" height="4.78" fill="#450c5f"/><rect x="975.32" y="535.00" width="17.24" height="4.78" fill="#45085a"/><rect x="992.26" y="535.00" width="17.24" height="4.78" fill="#450b5d"/><rect x="1009.20" y="535.00" width="17.24" height="4.78" fill="#440255"/><rect x="1026.14" y="535.00" width="17.24" height="4.78" fill="#440255"/><rect x="1043.09" y="535.00" width="17.24" height="4.78" fill="#440557"/><rect x="1060.03" y="535.00" width="17.24" height="4.78" fill="#450d5f"/><rect x="1076.97" y="535.00" width="17.24" height="4.78" fill="#45085b"/><rect x="1093.91" y="535.00" width="17.24" height="4.78" fill="#450659"/><rect x="1110.86" y="535.00" width="17.24" height="4.78" fill="#450b5e"/><rect x="450.10" y="539.48" width="17.24" height="4.78" fill="#45095b"/><rect x="467.04" y="539.48" width="17.24" height="4.78" fill="#450659"/><rect x="483.99" y="539.48" width="17.24" height="4.78" fill="#460f61"/><rect x="500.93" y="539.48" width="17.24" height="4.78" fill="#450d60"/><rect x="517.87" y="539.48" width="17.24" height="4.78" fill="#440558"/><rect x="534.81" y="539.48" width="17.24" height="4.78" fill="#450b5d"/><rect x="551.75" y="539.48" width="17.24" height="4.78" fill="#450a5d"/><rect x="568.70" y="539.48" width="17.24" height="4.78" fill="#461062"/><rect x="585.64" y="539.48" width="17.24" height="4.78" fill="#450e60"/><rect x="602.58" y="539.48" width="17.24" height="4.78" fill="#450659"/><rect x="619.52" y="539.48" width="17.24" height="4.78" fill="#461264"/><rect x="636.47" y="539.48" width="17.24" height="4.78" fill="#440356"/><rect x="653.41" y="539.48" width="17.24" height="4.78" fill="#45085b"/><rect x="670.35" y="539.48" width="17.24" height="4.78" fill="#460e60"/><rect x="687.30" y="539.48" width="17.24" height="4.78" fill="#440457"/><rect x="704.24" y="539.48" width="17.24" height="4.78" fill="#450a5c"/><rect x="721.18" y="539.48" width="17.24" height="4.78" fill="#440255"/><rect x="738.12" y="539.48" width="17.24" height="4.78" fill="#450d5f"/><rect x="755.07" y="539.48" width="17.24" height="4.78" fill="#460e61"/><rect x="772.01" y="539.48" width="17.24" height="4.78" fill="#450b5d"/><rect x="788.95" y="539.48" width="17.24" height="4.78" fill="#461062"/><rect x="805.89" y="539.48" width="17.24" height="4.78" fill="#450659"/><rect x="822.84" y="539.48" width="17.24" height="4.78" fill="#450d5f"/><rect x="839.78" y="539.48" width="17.24" height="4.78" fill="#450b5e"/><rect x="856.72" y="539.48" width="17.24" height="4.78" fill="#450b5e"/><rect x="873.66" y="539.48" width="17.24" height="4.78" fill="#45095c"/><rect x="890.61" y="539.48" width="17.24" height="4.78" fill="#461062"/><rect x="907.55" y="539.48" width="17.24" height="4.78" fill="#461264"/><rect x="924.49" y="539.48" width="17.24" height="4.78" fill="#45095c"/><rect x="941.43" y="539.48" width="17.24" height="4.78" fill="#450d5f"/><rect x="958.38" y="539.48" width="17.24" height="4.78" fill="#440255"/><rect x="975.32" y="539.48" width="17.24" height="4.78" fill="#450d60"/><rect x="992.26" y="539.48" width="17.24" height="4.78" fill="#450c5f"/><rect x="1009.20" y="539.48" width="17.24" height="4.78" fill="#461264"/><rect x="1026.14" y="539.48" width="17.24" height="4.78" fill="#460f62"/><rect x="1043.09" y="539.48" width="17.24" height="4.78" fill="#450659"/><rect x="1060.03" y="539.48" width="17.24" height="4.78" fill="#45085a"/><rect x="1076.97" y="539.48" width="17.24" height="4.78" fill="#450d5f"/><rect x="1093.91" y="539.48" width="17.24" height="4.78" fill="#440154"/><rect x="1110.86" y="539.48" width="17.24" height="4.78" fill="#45095c"/><rect x="450.10" y="543.97" width="17.24" height="4.78" fill="#440457"/><rect x="467.04" y="543.97" width="17.24" height="4.78" fill="#440356"/><rect x="483.99" y="543.97" width="17.24" height="4.78" fill="#440255"/><rect x="500.93" y="543.97" width="17.24" height="4.78" fill="#460e61"/><rect x="517.87" y="543.97" width="17.24" height="4.78" fill="#440356"/><rect x="534.81" y="543.97" width="17.24" height="4.78" fill="#440558"/><rect x="551.75" y="543.97" width="17.24" height="4.78" fill="#45085a"/><rect x="568.70" y="543.97" width="17.24" height="4.78" fill="#461062"/><rect x="585.64" y="543.97" width="17.24" height="4.78" fill="#440255"/><rect x="602.58" y="543.97" width="17.24" height="4.78" fill="#45095b"/><rect x="619.52" y="543.97" width="17.24" height="4.78" fill="#450b5d"/><rect x="636.47" y="543.97" width="17.24" height="4.78" fill="#461063"/><rect x="653.41" y="543.97" width="17.24" height="4.78" fill="#460f62"/><rect x="670.35" y="543.97" width="17.24" height="4.78" fill="#461062"/><rect x="687.30" y="543.97" width="17.24" height="4.78" fill="#450659"/><rect x="704.24" y="543.97" width="17.24" height="4.78" fill="#45085b"/><rect x="721.18" y="543.97" width="17.24" height="4.78" fill="#45075a"/><rect x="738.12" y="543.97" width="17.24" height="4.78" fill="#461063"/><rect x="755.07" y="543.97" width="17.24" height="4.78" fill="#461264"/><rect x="772.01" y="543.97" width="17.24" height="4.78" fill="#440456"/><rect x="788.95" y="543.97" width="17.24" height="4.78" fill="#440457"/><rect x="805.89" y="543.97" width="17.24" height="4.78" fill="#440558"/><rect x="822.84" y="543.97" width="17.24" height="4.78" fill="#440558"/><rect x="839.78" y="543.97" width="17.24" height="4.78" fill="#45095c"/><rect x="856.72" y="543.97" width="17.24" height="4.78" fill="#450b5e"/><rect x="873.66" y="543.97" width="17.24" height="4.78" fill="#450658"/><rect x="890.61" y="543.97" width="17.24" height="4.78" fill="#440154"/><rect x="907.55" y="543.97" width="17.24" height="4.78" fill="#45085b"/><rect x="924.49" y="543.97" width="17.24" height="4.78" fill="#45075a"/><rect x="941.43" y="543.97" width="17.24" height="4.78" fill="#450b5d"/><rect x="958.38" y="543.97" width="17.24" height="4.78" fill="#461264"/><rect x="975.32" y="543.97" width="17.24" height="4.78" fill="#450d5f"/><rect x="992.26" y="543.97" width="17.24" height="4.78" fill="#450a5d"/><rect x="1009.20" y="543.97" width="17.24" height="4.78" fill="#450c5e"/><rect x="1026.14" y="543.97" width="17.24" height="4.78" fill="#450d5f"/><rect x="1043.09" y="543.97" width="17.24" height="4.78" fill="#440255"/><rect x="1060.03" y="543.97" width="17.24" height="4.78" fill="#461163"/><rect x="1076.97" y="543.97" width="17.24" height="4.78" fill="#460f61"/><rect x="1093.91" y="543.97" width="17.24" height="4.78" fill="#461062"/><rect x="1110.86" y="543.97" width="17.24" height="4.78" fill="#460f61"/><rect x="450.10" y="548.45" width="17.24" height="4.78" fill="#45085a"/><rect x="467.04" y="548.45" width="17.24" height="4.78" fill="#45085b"/><rect x="483.99" y="548.45" width="17.24" height="4.78" fill="#440356"/><rect x="500.93" y="548.45" width="17.24" height="4.78" fill="#450c5e"/><rect x="517.87" y="548.45" width="17.24" height="4.78" fill="#440255"/><rect x="534.81" y="548.45" width="17.24" height="4.78" fill="#440255"/><rect x="551.75" y="548.45" width="17.24" height="4.78" fill="#440557"/><rect x="568.70" y="548.45" width="17.24" height="4.78" fill="#440457"/><rect x="585.64" y="548.45" width="17.24" height="4.78" fill="#45075a"/><rect x="602.58" y="548.45" width="17.24" height="4.78" fill="#440255"/><rect x="619.52" y="548.45" width="17.24" height="4.78" fill="#440154"/><rect x="636.47" y="548.45" width="17.24" height="4.78" fill="#440456"/><rect x="653.41" y="548.45" width="17.24" height="4.78" fill="#440356"/><rect x="670.35" y="548.45" width="17.24" height="4.78" fill="#45075a"/><rect x="687.30" y="548.45" width="17.24" height="4.78" fill="#440154"/><rect x="704.24" y="548.45" width="17.24" height="4.78" fill="#461062"/><rect x="721.18" y="548.45" width="17.24" height="4.78" fill="#450c5e"/><rect x="738.12" y="548.45" width="17.24" height="4.78" fill="#440456"/><rect x="755.07" y="548.45" width="17.24" height="4.78" fill="#450558"/><rect x="772.01" y="548.45" width="17.24" height="4.78" fill="#45075a"/><rect x="788.95" y="548.45" width="17.24" height="4.78" fill="#45075a"/><rect x="805.89" y="548.45" width="17.24" height="4.78" fill="#440356"/><rect x="822.84" y="548.45" width="17.24" height="4.78" fill="#461062"/><rect x="839.78" y="548.45" width="17.24" height="4.78" fill="#461264"/><rect x="856.72" y="548.45" width="17.24" height="4.78" fill="#45095c"/><rect x="873.66" y="548.45" width="17.24" height="4.78" fill="#45095c"/><rect x="890.61" y="548.45" width="17.24" height="4.78" fill="#440355"/><rect x="907.55" y="548.45" width="17.24" height="4.78" fill="#440356"/><rect x="924.49" y="548.45" width="17.24" height="4.78" fill="#45075a"/><rect x="941.43" y="548.45" width="17.24" height="4.78" fill="#450658"/><rect x="958.38" y="548.45" width="17.24" height="4.78" fill="#461062"/><rect x="975.32" y="548.45" width="17.24" height="4.78" fill="#440457"/><rect x="992.26" y="548.45" width="17.24" height="4.78" fill="#440154"/><rect x="1009.20" y="548.45" width="17.24" height="4.78" fill="#461264"/><rect x="1026.14" y="548.45" width="17.24" height="4.78" fill="#450a5d"/><rect x="1043.09" y="548.45" width="17.24" height="4.78" fill="#440456"/><rect x="1060.03" y="548.45" width="17.24" height="4.78" fill="#450b5d"/><rect x="1076.97" y="548.45" width="17.24" height="4.78" fill="#440154"/><rect x="1093.91" y="548.45" width="17.24" height="4.78" fill="#450a5d"/><rect x="1110.86" y="548.45" width="17.24" height="4.78" fill="#461264"/><rect x="450.10" y="552.94" width="17.24" height="4.78" fill="#461062"/><rect x="467.04" y="552.94" width="17.24" height="4.78" fill="#450d5f"/><rect x="483.99" y="552.94" width="17.24" height="4.78" fill="#450658"/><rect x="500.93" y="552.94" width="17.24" height="4.78" fill="#45075a"/><rect x="517.87" y="552.94" width="17.24" height="4.78" fill="#440457"/><rect x="534.81" y="552.94" width="17.24" height="4.78" fill="#460f61"/><rect x="551.75" y="552.94" width="17.24" height="4.78" fill="#450a5d"/><rect x="568.70" y="552.94" width="17.24" height="4.78" fill="#460f61"/><rect x="585.64" y="552.94" width="17.24" height="4.78" fill="#450759"/><rect x="602.58" y="552.94" width="17.24" height="4.78" fill="#440558"/><rect x="619.52" y="552.94" width="17.24" height="4.78" fill="#460f61"/><rect x="636.47" y="552.94" width="17.24" height="4.78" fill="#461264"/><rect x="653.41" y="552.94" width="17.24" height="4.78" fill="#461062"/><rect x="670.35" y="552.94" width="17.24" height="4.78" fill="#460f61"/><rect x="687.30" y="552.94" width="17.24" height="4.78" fill="#460f62"/><rect x="704.24" y="552.94" width="17.24" height="4.78" fill="#450e60"/><rect x="721.18" y="552.94" width="17.24" height="4.78" fill="#440558"/><rect x="738.12" y="552.94" width="17.24" height="4.78" fill="#450a5d"/><rect x="755.07" y="552.94" width="17.24" height="4.78" fill="#45075a"/><rect x="772.01" y="552.94" width="17.24" height="4.78" fill="#440254"/><rect x="788.95" y="552.94" width="17.24" height="4.78" fill="#440154"/><rect x="805.89" y="552.94" width="17.24" height="4.78" fill="#450659"/><rect x="822.84" y="552.94" width="17.24" height="4.78" fill="#450658"/><rect x="839.78" y="552.94" width="17.24" height="4.78" fill="#450d5f"/><rect x="856.72" y="552.94" width="17.24" height="4.78" fill="#461264"/><rect x="873.66" y="552.94" width="17.24" height="4.78" fill="#45095b"/><rect x="890.61" y="552.94" width="17.24" height="4.78" fill="#461163"/><rect x="907.55" y="552.94" width="17.24" height="4.78" fill="#461264"/><rect x="924.49" y="552.94" width="17.24" height="4.78" fill="#461264"/><rect x="941.43" y="552.94" width="17.24" height="4.78" fill="#45075a"/><rect x="958.38" y="552.94" width="17.24" height="4.78" fill="#440558"/><rect x="975.32" y="552.94" width="17.24" height="4.78" fill="#440558"/><rect x="992.26" y="552.94" width="17.24" height="4.78" fill="#440457"/><rect x="1009.20" y="552.94" width="17.24" height="4.78" fill="#440557"/><rect x="1026.14" y="552.94" width="17.24" height="4.78" fill="#450c5e"/><rect x="1043.09" y="552.94" width="17.24" height="4.78" fill="#461163"/><rect x="1060.03" y="552.94" width="17.24" height="4.78" fill="#461062"/><rect x="1076.97" y="552.94" width="17.24" height="4.78" fill="#45095c"/><rect x="1093.91" y="552.94" width="17.24" height="4.78" fill="#450c5f"/><rect x="1110.86" y="552.94" width="17.24" height="4.78" fill="#460f61"/><rect x="450.10" y="557.42" width="17.24" height="4.78" fill="#440255"/><rect x="467.04" y="557.42" width="17.24" height="4.78" fill="#450d5f"/><rect x="483.99" y="557.42" width="17.24" height="4.78" fill="#461163"/><rect x="500.93" y="557.42" width="17.24" height="4.78" fill="#460f61"/><rect x="517.87" y="557.42" width="17.24" height="4.78" fill="#460e60"/><rect x="534.81" y="557.42" width="17.24" height="4.78" fill="#45095c"/><rect x="551.75" y="557.42" width="17.24" height="4.78" fill="#440457"/><rect x="568.70" y="557.42" width="17.24" height="4.78" fill="#460f61"/><rect x="585.64" y="557.42" width="17.24" height="4.78" fill="#450759"/><rect x="602.58" y="557.42" width="17.24" height="4.78" fill="#460f61"/><rect x="619.52" y="557.42" width="17.24" height="4.78" fill="#461264"/><rect x="636.47" y="557.42" width="17.24" height="4.78" fill="#45085b"/><rect x="653.41" y="557.42" width="17.24" height="4.78" fill="#45085b"/><rect x="670.35" y="557.42" width="17.24" height="4.78" fill="#461264"/><rect x="687.30" y="557.42" width="17.24" height="4.78" fill="#450e60"/><rect x="704.24" y="557.42" width="17.24" height="4.78" fill="#440457"/><rect x="721.18" y="557.42" width="17.24" height="4.78" fill="#440356"/><rect x="738.12" y="557.42" width="17.24" height="4.78" fill="#440456"/><rect x="755.07" y="557.42" width="17.24" height="4.78" fill="#461163"/><rect x="772.01" y="557.42" width="17.24" height="4.78" fill="#460f61"/><rect x="788.95" y="557.42" width="17.24" height="4.78" fill="#440456"/><rect x="805.89" y="557.42" width="17.24" height="4.78" fill="#460f62"/><rect x="822.84" y="557.42" width="17.24" height="4.78" fill="#461264"/><rect x="839.78" y="557.42" width="17.24" height="4.78" fill="#450d5f"/><rect x="856.72" y="557.42" width="17.24" height="4.78" fill="#45075a"/><rect x="873.66" y="557.42" width="17.24" height="4.78" fill="#450b5d"/><rect x="890.61" y="557.42" width="17.24" height="4.78" fill="#440356"/><rect x="907.55" y="557.42" width="17.24" height="4.78" fill="#440154"/><rect x="924.49" y="557.42" width="17.24" height="4.78" fill="#461264"/><rect x="941.43" y="557.42" width="17.24" height="4.78" fill="#450c5f"/><rect x="958.38" y="557.42" width="17.24" height="4.78" fill="#450a5d"/><rect x="975.32" y="557.42" width="17.24" height="4.78" fill="#461163"/><rect x="992.26" y="557.42" width="17.24" height="4.78" fill="#45095b"/><rect x="1009.20" y="557.42" width="17.24" height="4.78" fill="#461062"/><rect x="1026.14" y="557.42" width="17.24" height="4.78" fill="#460f62"/><rect x="1043.09" y="557.42" width="17.24" height="4.78" fill="#440557"/><rect x="1060.03" y="557.42" width="17.24" height="4.78" fill="#450558"/><rect x="1076.97" y="557.42" width="17.24" height="4.78" fill="#450659"/><rect x="1093.91" y="557.42" width="17.24" height="4.78" fill="#440558"/><rect x="1110.86" y="557.42" width="17.24" height="4.78" fill="#450b5e"/><rect x="450.10" y="561.91" width="17.24" height="4.78" fill="#450658"/><rect x="467.04" y="561.91" width="17.24" height="4.78" fill="#45085b"/><rect x="483.99" y="561.91" width="17.24" height="4.78" fill="#440356"/><rect x="500.93" y="561.91" width="17.24" height="4.78" fill="#461163"/><rect x="517.87" y="561.91" width="17.24" height="4.78" fill="#45075a"/><rect x="534.81" y="561.91" width="17.24" height="4.78" fill="#45095c"/><rect x="551.75" y="561.91" width="17.24" height="4.78" fill="#450b5e"/><rect x="568.70" y="561.91" width="17.24" height="4.78" fill="#461163"/><rect x="585.64" y="561.91" width="17.24" height="4.78" fill="#45085b"/><rect x="602.58" y="561.91" width="17.24" height="4.78" fill="#461163"/><rect x="619.52" y="561.91" width="17.24" height="4.78" fill="#450a5c"/><rect x="636.47" y="561.91" width="17.24" height="4.78" fill="#450a5d"/><rect x="653.41" y="561.91" width="17.24" height="4.78" fill="#450a5d"/><rect x="670.35" y="561.91" width="17.24" height="4.78" fill="#440154"/><rect x="687.30" y="561.91" width="17.24" height="4.78" fill="#45095b"/><rect x="704.24" y="561.91" width="17.24" height="4.78" fill="#440457"/><rect x="721.18" y="561.91" width="17.24" height="4.78" fill="#440154"/><rect x="738.12" y="561.91" width="17.24" height="4.78" fill="#460f61"/><rect x="755.07" y="561.91" width="17.24" height="4.78" fill="#440457"/><rect x="772.01" y="561.91" width="17.24" height="4.78" fill="#45095c"/><rect x="788.95" y="561.91" width="17.24" height="4.78" fill="#450e60"/><rect x="805.89" y="561.91" width="17.24" height="4.78" fill="#450b5d"/><rect x="822.84" y="561.91" width="17.24" height="4.78" fill="#450759"/><rect x="839.78" y="561.91" width="17.24" height="4.78" fill="#450a5d"/><rect x="856.72" y="561.91" width="17.24" height="4.78" fill="#450b5d"/><rect x="873.66" y="561.91" width="17.24" height="4.78" fill="#460f61"/><rect x="890.61" y="561.91" width="17.24" height="4.78" fill="#440356"/><rect x="907.55" y="561.91" width="17.24" height="4.78" fill="#450b5d"/><rect x="924.49" y="561.91" width="17.24" height="4.78" fill="#440558"/><rect x="941.43" y="561.91" width="17.24" height="4.78" fill="#450659"/><rect x="958.38" y="561.91" width="17.24" height="4.78" fill="#460f61"/><rect x="975.32" y="561.91" width="17.24" height="4.78" fill="#450a5c"/><rect x="992.26" y="561.91" width="17.24" height="4.78" fill="#450b5d"/><rect x="1009.20" y="561.91" width="17.24" height="4.78" fill="#460e61"/><rect x="1026.14" y="561.91" width="17.24" height="4.78" fill="#461163"/><rect x="1043.09" y="561.91" width="17.24" height="4.78" fill="#45095b"/><rect x="1060.03" y="561.91" width="17.24" height="4.78" fill="#450c5e"/><rect x="1076.97" y="561.91" width="17.24" height="4.78" fill="#450a5c"/><rect x="1093.91" y="561.91" width="17.24" height="4.78" fill="#450a5c"/><rect x="1110.86" y="561.91" width="17.24" height="4.78" fill="#450d5f"/><rect x="450.10" y="566.39" width="17.24" height="4.78" fill="#45095b"/><rect x="467.04" y="566.39" width="17.24" height="4.78" fill="#450a5d"/><rect x="483.99" y="566.39" width="17.24" height="4.78" fill="#45095c"/><rect x="500.93" y="566.39" width="17.24" height="4.78" fill="#461164"/><rect x="517.87" y="566.39" width="17.24" height="4.78" fill="#450d60"/><rect x="534.81" y="566.39" width="17.24" height="4.78" fill="#461062"/><rect x="551.75" y="566.39" width="17.24" height="4.78" fill="#461164"/><rect x="568.70" y="566.39" width="17.24" height="4.78" fill="#450658"/><rect x="585.64" y="566.39" width="17.24" height="4.78" fill="#450b5d"/><rect x="602.58" y="566.39" width="17.24" height="4.78" fill="#461264"/><rect x="619.52" y="566.39" width="17.24" height="4.78" fill="#461062"/><rect x="636.47" y="566.39" width="17.24" height="4.78" fill="#440356"/><rect x="653.41" y="566.39" width="17.24" height="4.78" fill="#440356"/><rect x="670.35" y="566.39" width="17.24" height="4.78" fill="#45095b"/><rect x="687.30" y="566.39" width="17.24" height="4.78" fill="#440255"/><rect x="704.24" y="566.39" width="17.24" height="4.78" fill="#440558"/><rect x="721.18" y="566.39" width="17.24" height="4.78" fill="#440255"/><rect x="738.12" y="566.39" width="17.24" height="4.78" fill="#450d5f"/><rect x="755.07" y="566.39" width="17.24" height="4.78" fill="#460f61"/><rect x="772.01" y="566.39" width="17.24" height="4.78" fill="#461163"/><rect x="788.95" y="566.39" width="17.24" height="4.78" fill="#440457"/><rect x="805.89" y="566.39" width="17.24" height="4.78" fill="#450e60"/><rect x="822.84" y="566.39" width="17.24" height="4.78" fill="#450d5f"/><rect x="839.78" y="566.39" width="17.24" height="4.78" fill="#440456"/><rect x="856.72" y="566.39" width="17.24" height="4.78" fill="#461063"/><rect x="873.66" y="566.39" width="17.24" height="4.78" fill="#461264"/><rect x="890.61" y="566.39" width="17.24" height="4.78" fill="#440558"/><rect x="907.55" y="566.39" width="17.24" height="4.78" fill="#461264"/><rect x="924.49" y="566.39" width="17.24" height="4.78" fill="#45085b"/><rect x="941.43" y="566.39" width="17.24" height="4.78" fill="#450a5c"/><rect x="958.38" y="566.39" width="17.24" height="4.78" fill="#461264"/><rect x="975.32" y="566.39" width="17.24" height="4.78" fill="#461062"/><rect x="992.26" y="566.39" width="17.24" height="4.78" fill="#440457"/><rect x="1009.20" y="566.39" width="17.24" height="4.78" fill="#45095b"/><rect x="1026.14" y="566.39" width="17.24" height="4.78" fill="#450a5d"/><rect x="1043.09" y="566.39" width="17.24" height="4.78" fill="#45075a"/><rect x="1060.03" y="566.39" width="17.24" height="4.78" fill="#440457"/><rect x="1076.97" y="566.39" width="17.24" height="4.78" fill="#450759"/><rect x="1093.91" y="566.39" width="17.24" height="4.78" fill="#450e60"/><rect x="1110.86" y="566.39" width="17.24" height="4.78" fill="#440154"/><rect x="450.10" y="570.88" width="17.24" height="4.78" fill="#450b5d"/><rect x="467.04" y="570.88" width="17.24" height="4.78" fill="#45095b"/><rect x="483.99" y="570.88" width="17.24" height="4.78" fill="#440154"/><rect x="500.93" y="570.88" width="17.24" height="4.78" fill="#450759"/><rect x="517.87" y="570.88" width="17.24" height="4.78" fill="#450c5e"/><rect x="534.81" y="570.88" width="17.24" height="4.78" fill="#450a5c"/><rect x="551.75" y="570.88" width="17.24" height="4.78" fill="#440255"/><rect x="568.70" y="570.88" width="17.24" height="4.78" fill="#461264"/><rect x="585.64" y="570.88" width="17.24" height="4.78" fill="#460f61"/><rect x="602.58" y="570.88" width="17.24" height="4.78" fill="#461264"/><rect x="619.52" y="570.88" width="17.24" height="4.78" fill="#440356"/><rect x="636.47" y="570.88" width="17.24" height="4.78" fill="#450658"/><rect x="653.41" y="570.88" width="17.24" height="4.78" fill="#440255"/><rect x="670.35" y="570.88" width="17.24" height="4.78" fill="#460f61"/><rect x="687.30" y="570.88" width="17.24" height="4.78" fill="#450658"/><rect x="704.24" y="570.88" width="17.24" height="4.78" fill="#440356"/><rect x="721.18" y="570.88" width="17.24" height="4.78" fill="#45085b"/><rect x="738.12" y="570.88" width="17.24" height="4.78" fill="#461163"/><rect x="755.07" y="570.88" width="17.24" height="4.78" fill="#460f62"/><rect x="772.01" y="570.88" width="17.24" height="4.78" fill="#450658"/><rect x="788.95" y="570.88" width="17.24" height="4.78" fill="#440456"/><rect x="805.89" y="570.88" width="17.24" height="4.78" fill="#461163"/><rect x="822.84" y="570.88" width="17.24" height="4.78" fill="#450b5d"/><rect x="839.78" y="570.88" width="17.24" height="4.78" fill="#450d60"/><rect x="856.72" y="570.88" width="17.24" height="4.78" fill="#440355"/><rect x="873.66" y="570.88" width="17.24" height="4.78" fill="#440255"/><rect x="890.61" y="570.88" width="17.24" height="4.78" fill="#450d5f"/><rect x="907.55" y="570.88" width="17.24" height="4.78" fill="#45085b"/><rect x="924.49" y="570.88" width="17.24" height="4.78" fill="#440255"/><rect x="941.43" y="570.88" width="17.24" height="4.78" fill="#461163"/><rect x="958.38" y="570.88" width="17.24" height="4.78" fill="#450c5e"/><rect x="975.32" y="570.88" width="17.24" height="4.78" fill="#460f61"/><rect x="992.26" y="570.88" width="17.24" height="4.78" fill="#440255"/><rect x="1009.20" y="570.88" width="17.24" height="4.78" fill="#461062"/><rect x="1026.14" y="570.88" width="17.24" height="4.78" fill="#440255"/><rect x="1043.09" y="570.88" width="17.24" height="4.78" fill="#461062"/><rect x="1060.03" y="570.88" width="17.24" height="4.78" fill="#45095b"/><rect x="1076.97" y="570.88" width="17.24" height="4.78" fill="#45075a"/><rect x="1093.91" y="570.88" width="17.24" height="4.78" fill="#450b5d"/><rect x="1110.86" y="570.88" width="17.24" height="4.78" fill="#461163"/><rect x="450.10" y="575.36" width="17.24" height="4.78" fill="#450658"/><rect x="467.04" y="575.36" width="17.24" height="4.78" fill="#440356"/><rect x="483.99" y="575.36" width="17.24" height="4.78" fill="#450a5d"/><rect x="500.93" y="575.36" width="17.24" height="4.78" fill="#440558"/><rect x="517.87" y="575.36" width="17.24" height="4.78" fill="#440356"/><rect x="534.81" y="575.36" width="17.24" height="4.78" fill="#440457"/><rect x="551.75" y="575.36" width="17.24" height="4.78" fill="#440255"/><rect x="568.70" y="575.36" width="17.24" height="4.78" fill="#440557"/><rect x="585.64" y="575.36" width="17.24" height="4.78" fill="#450659"/><rect x="602.58" y="575.36" width="17.24" height="4.78" fill="#450659"/><rect x="619.52" y="575.36" width="17.24" height="4.78" fill="#460e61"/><rect x="636.47" y="575.36" width="17.24" height="4.78" fill="#450659"/><rect x="653.41" y="575.36" width="17.24" height="4.78" fill="#450a5c"/><rect x="670.35" y="575.36" width="17.24" height="4.78" fill="#440457"/><rect x="687.30" y="575.36" width="17.24" height="4.78" fill="#45075a"/><rect x="704.24" y="575.36" width="17.24" height="4.78" fill="#440154"/><rect x="721.18" y="575.36" width="17.24" height="4.78" fill="#450558"/><rect x="738.12" y="575.36" width="17.24" height="4.78" fill="#440154"/><rect x="755.07" y="575.36" width="17.24" height="4.78" fill="#450e60"/><rect x="772.01" y="575.36" width="17.24" height="4.78" fill="#450b5d"/><rect x="788.95" y="575.36" width="17.24" height="4.78" fill="#440457"/><rect x="805.89" y="575.36" width="17.24" height="4.78" fill="#45095c"/><rect x="822.84" y="575.36" width="17.24" height="4.78" fill="#461163"/><rect x="839.78" y="575.36" width="17.24" height="4.78" fill="#440356"/><rect x="856.72" y="575.36" width="17.24" height="4.78" fill="#460f62"/><rect x="873.66" y="575.36" width="17.24" height="4.78" fill="#45095b"/><rect x="890.61" y="575.36" width="17.24" height="4.78" fill="#450a5c"/><rect x="907.55" y="575.36" width="17.24" height="4.78" fill="#461062"/><rect x="924.49" y="575.36" width="17.24" height="4.78" fill="#45085a"/><rect x="941.43" y="575.36" width="17.24" height="4.78" fill="#450a5c"/><rect x="958.38" y="575.36" width="17.24" height="4.78" fill="#450d5f"/><rect x="975.32" y="575.36" width="17.24" height="4.78" fill="#461264"/><rect x="992.26" y="575.36" width="17.24" height="4.78" fill="#45075a"/><rect x="1009.20" y="575.36" width="17.24" height="4.78" fill="#461062"/><rect x="1026.14" y="575.36" width="17.24" height="4.78" fill="#450d60"/><rect x="1043.09" y="575.36" width="17.24" height="4.78" fill="#450c5e"/><rect x="1060.03" y="575.36" width="17.24" height="4.78" fill="#45085b"/><rect x="1076.97" y="575.36" width="17.24" height="4.78" fill="#45075a"/><rect x="1093.91" y="575.36" width="17.24" height="4.78" fill="#440255"/><rect x="1110.86" y="575.36" width="17.24" height="4.78" fill="#440356"/><rect x="450.10" y="579.84" width="17.24" height="4.78" fill="#440255"/><rect x="467.04" y="579.84" width="17.24" height="4.78" fill="#450e60"/><rect x="483.99" y="579.84" width="17.24" height="4.78" fill="#450558"/><rect x="500.93" y="579.84" width="17.24" height="4.78" fill="#440457"/><rect x="517.87" y="579.84" width="17.24" height="4.78" fill="#440255"/><rect x="534.81" y="579.84" width="17.24" height="4.78" fill="#461062"/><rect x="551.75" y="579.84" width="17.24" height="4.78" fill="#461062"/><rect x="568.70" y="579.84" width="17.24" height="4.78" fill="#450d5f"/><rect x="585.64" y="579.84" width="17.24" height="4.78" fill="#450659"/><rect x="602.58" y="579.84" width="17.24" height="4.78" fill="#440558"/><rect x="619.52" y="579.84" width="17.24" height="4.78" fill="#450659"/><rect x="636.47" y="579.84" width="17.24" height="4.78" fill="#45095c"/><rect x="653.41" y="579.84" width="17.24" height="4.78" fill="#440457"/><rect x="670.35" y="579.84" width="17.24" height="4.78" fill="#45095b"/><rect x="687.30" y="579.84" width="17.24" height="4.78" fill="#450658"/><rect x="704.24" y="579.84" width="17.24" height="4.78" fill="#461264"/><rect x="721.18" y="579.84" width="17.24" height="4.78" fill="#461264"/><rect x="738.12" y="579.84" width="17.24" height="4.78" fill="#450b5d"/><rect x="755.07" y="579.84" width="17.24" height="4.78" fill="#440558"/><rect x="772.01" y="579.84" width="17.24" height="4.78" fill="#461264"/><rect x="788.95" y="579.84" width="17.24" height="4.78" fill="#450659"/><rect x="805.89" y="579.84" width="17.24" height="4.78" fill="#45075a"/><rect x="822.84" y="579.84" width="17.24" height="4.78" fill="#440154"/><rect x="839.78" y="579.84" width="17.24" height="4.78" fill="#45085a"/><rect x="856.72" y="579.84" width="17.24" height="4.78" fill="#45095c"/><rect x="873.66" y="579.84" width="17.24" height="4.78" fill="#450a5c"/><rect x="890.61" y="579.84" width="17.24" height="4.78" fill="#440557"/><rect x="907.55" y="579.84" width="17.24" height="4.78" fill="#450a5c"/><rect x="924.49" y="579.84" width="17.24" height="4.78" fill="#440154"/><rect x="941.43" y="579.84" width="17.24" height="4.78" fill="#450658"/><rect x="958.38" y="579.84" width="17.24" height="4.78" fill="#440355"/><rect x="975.32" y="579.84" width="17.24" height="4.78" fill="#45085b"/><rect x="992.26" y="579.84" width="17.24" height="4.78" fill="#440255"/><rect x="1009.20" y="579.84" width="17.24" height="4.78" fill="#440154"/><rect x="1026.14" y="579.84" width="17.24" height="4.78" fill="#450659"/><rect x="1043.09" y="579.84" width="17.24" height="4.78" fill="#440558"/><rect x="1060.03" y="579.84" width="17.24" height="4.78" fill="#450b5e"/><rect x="1076.97" y="579.84" width="17.24" height="4.78" fill="#450a5d"/><rect x="1093.91" y="579.84" width="17.24" height="4.78" fill="#460e60"/><rect x="1110.86" y="579.84" width="17.24" height="4.78" fill="#450d5f"/><rect x="450.10" y="584.33" width="17.24" height="4.78" fill="#450e60"/><rect x="467.04" y="584.33" width="17.24" height="4.78" fill="#461063"/><rect x="483.99" y="584.33" width="17.24" height="4.78" fill="#45085a"/><rect x="500.93" y="584.33" width="17.24" height="4.78" fill="#450759"/><rect x="517.87" y="584.33" width="17.24" height="4.78" fill="#461264"/><rect x="534.81" y="584.33" width="17.24" height="4.78" fill="#440456"/><rect x="551.75" y="584.33" width="17.24" height="4.78" fill="#450e60"/><rect x="568.70" y="584.33" width="17.24" height="4.78" fill="#450c5f"/><rect x="585.64" y="584.33" width="17.24" height="4.78" fill="#440255"/><rect x="602.58" y="584.33" width="17.24" height="4.78" fill="#461062"/><rect x="619.52" y="584.33" width="17.24" height="4.78" fill="#461163"/><rect x="636.47" y="584.33" width="17.24" height="4.78" fill="#450c5e"/><rect x="653.41" y="584.33" width="17.24" height="4.78" fill="#450e60"/><rect x="670.35" y="584.33" width="17.24" height="4.78" fill="#460f61"/><rect x="687.30" y="584.33" width="17.24" height="4.78" fill="#440356"/><rect x="704.24" y="584.33" width="17.24" height="4.78" fill="#450a5d"/><rect x="721.18" y="584.33" width="17.24" height="4.78" fill="#450a5c"/><rect x="738.12" y="584.33" width="17.24" height="4.78" fill="#461062"/><rect x="755.07" y="584.33" width="17.24" height="4.78" fill="#460f61"/><rect x="772.01" y="584.33" width="17.24" height="4.78" fill="#460f62"/><rect x="788.95" y="584.33" width="17.24" height="4.78" fill="#450b5e"/><rect x="805.89" y="584.33" width="17.24" height="4.78" fill="#461163"/><rect x="822.84" y="584.33" width="17.24" height="4.78" fill="#450d5f"/><rect x="839.78" y="584.33" width="17.24" height="4.78" fill="#450d5f"/><rect x="856.72" y="584.33" width="17.24" height="4.78" fill="#440558"/><rect x="873.66" y="584.33" width="17.24" height="4.78" fill="#440255"/><rect x="890.61" y="584.33" width="17.24" height="4.78" fill="#440356"/><rect x="907.55" y="584.33" width="17.24" height="4.78" fill="#45075a"/><rect x="924.49" y="584.33" width="17.24" height="4.78" fill="#440356"/><rect x="941.43" y="584.33" width="17.24" height="4.78" fill="#461062"/><rect x="958.38" y="584.33" width="17.24" height="4.78" fill="#450b5d"/><rect x="975.32" y="584.33" width="17.24" height="4.78" fill="#450c5e"/><rect x="992.26" y="584.33" width="17.24" height="4.78" fill="#450c5e"/><rect x="1009.20" y="584.33" width="17.24" height="4.78" fill="#450d5f"/><rect x="1026.14" y="584.33" width="17.24" height="4.78" fill="#450a5c"/><rect x="1043.09" y="584.33" width="17.24" height="4.78" fill="#440154"/><rect x="1060.03" y="584.33" width="17.24" height="4.78" fill="#460f61"/><rect x="1076.97" y="584.33" width="17.24" height="4.78" fill="#450e60"/><rect x="1093.91" y="584.33" width="17.24" height="4.78" fill="#450a5c"/><rect x="1110.86" y="584.33" width="17.24" height="4.78" fill="#450a5d"/><rect x="450.10" y="588.81" width="17.24" height="4.78" fill="#450d5f"/><rect x="467.04" y="588.81" width="17.24" height="4.78" fill="#440255"/><rect x="483.99" y="588.81" width="17.24" height="4.78" fill="#450e60"/><rect x="500.93" y="588.81" width="17.24" height="4.78" fill="#450558"/><rect x="517.87" y="588.81" width="17.24" height="4.78" fill="#440255"/><rect x="534.81" y="588.81" width="17.24" height="4.78" fill="#450658"/><rect x="551.75" y="588.81" width="17.24" height="4.78" fill="#450e60"/><rect x="568.70" y="588.81" width="17.24" height="4.78" fill="#440557"/><rect x="585.64" y="588.81" width="17.24" height="4.78" fill="#450e60"/><rect x="602.58" y="588.81" width="17.24" height="4.78" fill="#461264"/><rect x="619.52" y="588.81" width="17.24" height="4.78" fill="#450a5c"/><rect x="636.47" y="588.81" width="17.24" height="4.78" fill="#45085a"/><rect x="653.41" y="588.81" width="17.24" height="4.78" fill="#45095c"/><rect x="670.35" y="588.81" width="17.24" height="4.78" fill="#450d5f"/><rect x="687.30" y="588.81" width="17.24" height="4.78" fill="#460e61"/><rect x="704.24" y="588.81" width="17.24" height="4.78" fill="#450c5e"/><rect x="721.18" y="588.81" width="17.24" height="4.78" fill="#450c5f"/><rect x="738.12" y="588.81" width="17.24" height="4.78" fill="#440255"/><rect x="755.07" y="588.81" width="17.24" height="4.78" fill="#440456"/><rect x="772.01" y="588.81" width="17.24" height="4.78" fill="#450558"/><rect x="788.95" y="588.81" width="17.24" height="4.78" fill="#450e60"/><rect x="805.89" y="588.81" width="17.24" height="4.78" fill="#450659"/><rect x="822.84" y="588.81" width="17.24" height="4.78" fill="#450b5d"/><rect x="839.78" y="588.81" width="17.24" height="4.78" fill="#440154"/><rect x="856.72" y="588.81" width="17.24" height="4.78" fill="#440255"/><rect x="873.66" y="588.81" width="17.24" height="4.78" fill="#450658"/><rect x="890.61" y="588.81" width="17.24" height="4.78" fill="#450d5f"/><rect x="907.55" y="588.81" width="17.24" height="4.78" fill="#450d5f"/><rect x="924.49" y="588.81" width="17.24" height="4.78" fill="#450d5f"/><rect x="941.43" y="588.81" width="17.24" height="4.78" fill="#450659"/><rect x="958.38" y="588.81" width="17.24" height="4.78" fill="#450a5d"/><rect x="975.32" y="588.81" width="17.24" height="4.78" fill="#45095c"/><rect x="992.26" y="588.81" width="17.24" height="4.78" fill="#45095c"/><rect x="1009.20" y="588.81" width="17.24" height="4.78" fill="#440356"/><rect x="1026.14" y="588.81" width="17.24" height="4.78" fill="#461163"/><rect x="1043.09" y="588.81" width="17.24" height="4.78" fill="#440457"/><rect x="1060.03" y="588.81" width="17.24" height="4.78" fill="#461264"/><rect x="1076.97" y="588.81" width="17.24" height="4.78" fill="#461163"/><rect x="1093.91" y="588.81" width="17.24" height="4.78" fill="#440154"/><rect x="1110.86" y="588.81" width="17.24" height="4.78" fill="#45095c"/><rect x="450.10" y="593.30" width="17.24" height="4.78" fill="#460f62"/><rect x="467.04" y="593.30" width="17.24" height="4.78" fill="#461264"/><rect x="483.99" y="593.30" width="17.24" height="4.78" fill="#45095b"/><rect x="500.93" y="593.30" width="17.24" height="4.78" fill="#450658"/><rect x="517.87" y="593.30" width="17.24" height="4.78" fill="#440557"/><rect x="534.81" y="593.30" width="17.24" height="4.78" fill="#461264"/><rect x="551.75" y="593.30" width="17.24" height="4.78" fill="#440557"/><rect x="568.70" y="593.30" width="17.24" height="4.78" fill="#450b5e"/><rect x="585.64" y="593.30" width="17.24" height="4.78" fill="#440356"/><rect x="602.58" y="593.30" width="17.24" height="4.78" fill="#450a5d"/><rect x="619.52" y="593.30" width="17.24" height="4.78" fill="#461264"/><rect x="636.47" y="593.30" width="17.24" height="4.78" fill="#440356"/><rect x="653.41" y="593.30" width="17.24" height="4.78" fill="#460f62"/><rect x="670.35" y="593.30" width="17.24" height="4.78" fill="#450a5c"/><rect x="687.30" y="593.30" width="17.24" height="4.78" fill="#461163"/><rect x="704.24" y="593.30" width="17.24" height="4.78" fill="#450d60"/><rect x="721.18" y="593.30" width="17.24" height="4.78" fill="#440558"/><rect x="738.12" y="593.30" width="17.24" height="4.78" fill="#461163"/><rect x="755.07" y="593.30" width="17.24" height="4.78" fill="#450a5c"/><rect x="772.01" y="593.30" width="17.24" height="4.78" fill="#440154"/><rect x="788.95" y="593.30" width="17.24" height="4.78" fill="#440154"/><rect x="805.89" y="593.30" width="17.24" height="4.78" fill="#450a5c"/><rect x="822.84" y="593.30" width="17.24" height="4.78" fill="#45095b"/><rect x="839.78" y="593.30" width="17.24" height="4.78" fill="#450659"/><rect x="856.72" y="593.30" width="17.24" height="4.78" fill="#440356"/><rect x="873.66" y="593.30" width="17.24" height="4.78" fill="#45075a"/><rect x="890.61" y="593.30" width="17.24" height="4.78" fill="#450759"/><rect x="907.55" y="593.30" width="17.24" height="4.78" fill="#461062"/><rect x="924.49" y="593.30" width="17.24" height="4.78" fill="#440154"/><rect x="941.43" y="593.30" width="17.24" height="4.78" fill="#460e60"/><rect x="958.38" y="593.30" width="17.24" height="4.78" fill="#461062"/><rect x="975.32" y="593.30" width="17.24" height="4.78" fill="#440356"/><rect x="992.26" y="593.30" width="17.24" height="4.78" fill="#461163"/><rect x="1009.20" y="593.30" width="17.24" height="4.78" fill="#450d60"/><rect x="1026.14" y="593.30" width="17.24" height="4.78" fill="#461163"/><rect x="1043.09" y="593.30" width="17.24" height="4.78" fill="#450659"/><rect x="1060.03" y="593.30" width="17.24" height="4.78" fill="#45085a"/><rect x="1076.97" y="593.30" width="17.24" height="4.78" fill="#45085a"/><rect x="1093.91" y="593.30" width="17.24" height="4.78" fill="#461264"/><rect x="1110.86" y="593.30" width="17.24" height="4.78" fill="#450b5e"/><rect x="450.10" y="597.78" width="17.24" height="4.78" fill="#450e60"/><rect x="467.04" y="597.78" width="17.24" height="4.78" fill="#45085b"/><rect x="483.99" y="597.78" width="17.24" height="4.78" fill="#471a6c"/><rect x="500.93" y="597.78" width="17.24" height="4.78" fill="#461769"/><rect x="517.87" y="597.78" width="17.24" height="4.78" fill="#471c6e"/><rect x="534.81" y="597.78" width="17.24" height="4.78" fill="#472a79"/><rect x="551.75" y="597.78" width="17.24" height="4.78" fill="#45317c"/><rect x="568.70" y="597.78" width="17.24" height="4.78" fill="#3f4988"/><rect x="585.64" y="597.78" width="17.24" height="4.78" fill="#3f4988"/><rect x="602.58" y="597.78" width="17.24" height="4.78" fill="#3b518a"/><rect x="619.52" y="597.78" width="17.24" height="4.78" fill="#3e4a88"/><rect x="636.47" y="597.78" width="17.24" height="4.78" fill="#404687"/><rect x="653.41" y="597.78" width="17.24" height="4.78" fill="#45317c"/><rect x="670.35" y="597.78" width="17.24" height="4.78" fill="#472a79"/><rect x="687.30" y="597.78" width="17.24" height="4.78" fill="#461769"/><rect x="704.24" y="597.78" width="17.24" height="4.78" fill="#461163"/><rect x="721.18" y="597.78" width="17.24" height="4.78" fill="#450c5e"/><rect x="738.12" y="597.78" width="17.24" height="4.78" fill="#461163"/><rect x="755.07" y="597.78" width="17.24" height="4.78" fill="#47196a"/><rect x="772.01" y="597.78" width="17.24" height="4.78" fill="#423e84"/><rect x="788.95" y="597.78" width="17.24" height="4.78" fill="#375b8c"/><rect x="805.89" y="597.78" width="17.24" height="4.78" fill="#2b768e"/><rect x="822.84" y="597.78" width="17.24" height="4.78" fill="#24898d"/><rect x="839.78" y="597.78" width="17.24" height="4.78" fill="#21928c"/><rect x="856.72" y="597.78" width="17.24" height="4.78" fill="#238c8c"/><rect x="873.66" y="597.78" width="17.24" height="4.78" fill="#297c8e"/><rect x="890.61" y="597.78" width="17.24" height="4.78" fill="#34628d"/><rect x="907.55" y="597.78" width="17.24" height="4.78" fill="#404687"/><rect x="924.49" y="597.78" width="17.24" height="4.78" fill="#414387"/><rect x="941.43" y="597.78" width="17.24" height="4.78" fill="#414387"/><rect x="958.38" y="597.78" width="17.24" height="4.78" fill="#45337d"/><rect x="975.32" y="597.78" width="17.24" height="4.78" fill="#462f7b"/><rect x="992.26" y="597.78" width="17.24" height="4.78" fill="#472978"/><rect x="1009.20" y="597.78" width="17.24" height="4.78" fill="#462e7a"/><rect x="1026.14" y="597.78" width="17.24" height="4.78" fill="#45337d"/><rect x="1043.09" y="597.78" width="17.24" height="4.78" fill="#45337d"/><rect x="1060.03" y="597.78" width="17.24" height="4.78" fill="#462f7b"/><rect x="1076.97" y="597.78" width="17.24" height="4.78" fill="#462c79"/><rect x="1093.91" y="597.78" width="17.24" height="4.78" fill="#471a6c"/><rect x="1110.86" y="597.78" width="17.24" height="4.78" fill="#461365"/><rect x="450.10" y="602.27" width="17.24" height="4.78" fill="#471a6b"/><rect x="467.04" y="602.27" width="17.24" height="4.78" fill="#450c5e"/><rect x="483.99" y="602.27" width="17.24" height="4.78" fill="#45317c"/><rect x="500.93" y="602.27" width="17.24" height="4.78" fill="#472a79"/><rect x="517.87" y="602.27" width="17.24" height="4.78" fill="#44347e"/><rect x="534.81" y="602.27" width="17.24" height="4.78" fill="#3d4c89"/><rect x="551.75" y="602.27" width="17.24" height="4.78" fill="#39578b"/><rect x="568.70" y="602.27" width="17.24" height="4.78" fill="#287d8e"/><rect x="585.64" y="602.27" width="17.24" height="4.78" fill="#287d8e"/><rect x="602.58" y="602.27" width="17.24" height="4.78" fill="#238c8c"/><rect x="619.52" y="602.27" width="17.24" height="4.78" fill="#27808d"/><rect x="636.47" y="602.27" width="17.24" height="4.78" fill="#2a788e"/><rect x="653.41" y="602.27" width="17.24" height="4.78" fill="#39578b"/><rect x="670.35" y="602.27" width="17.24" height="4.78" fill="#3d4c89"/><rect x="687.30" y="602.27" width="17.24" height="4.78" fill="#472a79"/><rect x="704.24" y="602.27" width="17.24" height="4.78" fill="#482072"/><rect x="721.18" y="602.27" width="17.24" height="4.78" fill="#45085b"/><rect x="738.12" y="602.27" width="17.24" height="4.78" fill="#45085b"/><rect x="755.07" y="602.27" width="17.24" height="4.78" fill="#462e7a"/><rect x="772.01" y="602.27" width="17.24" height="4.78" fill="#306c8e"/><rect x="788.95" y="602.27" width="17.24" height="4.78" fill="#229c88"/><rect x="805.89" y="602.27" width="17.24" height="4.78" fill="#5fc860"/><rect x="822.84" y="602.27" width="17.24" height="4.78" fill="#bddf26"/><rect x="839.78" y="602.27" width="17.24" height="4.78" fill="#eae525"/><rect x="856.72" y="602.27" width="17.24" height="4.78" fill="#cae126"/><rect x="873.66" y="602.27" width="17.24" height="4.78" fill="#7ad151"/><rect x="890.61" y="602.27" width="17.24" height="4.78" fill="#22a884"/><rect x="907.55" y="602.27" width="17.24" height="4.78" fill="#2a788e"/><rect x="924.49" y="602.27" width="17.24" height="4.78" fill="#2c738e"/><rect x="941.43" y="602.27" width="17.24" height="4.78" fill="#2c738e"/><rect x="958.38" y="602.27" width="17.24" height="4.78" fill="#375a8c"/><rect x="975.32" y="602.27" width="17.24" height="4.78" fill="#3a548b"/><rect x="992.26" y="602.27" width="17.24" height="4.78" fill="#3f4988"/><rect x="1009.20" y="602.27" width="17.24" height="4.78" fill="#3b528a"/><rect x="1026.14" y="602.27" width="17.24" height="4.78" fill="#375a8c"/><rect x="1043.09" y="602.27" width="17.24" height="4.78" fill="#375a8c"/><rect x="1060.03" y="602.27" width="17.24" height="4.78" fill="#3a548b"/><rect x="1076.97" y="602.27" width="17.24" height="4.78" fill="#3c4f89"/><rect x="1093.91" y="602.27" width="17.24" height="4.78" fill="#45317c"/><rect x="1110.86" y="602.27" width="17.24" height="4.78" fill="#482475"/><rect x="450.10" y="606.75" width="17.24" height="4.78" fill="#450e60"/><rect x="467.04" y="606.75" width="17.24" height="4.78" fill="#450d60"/><rect x="483.99" y="606.75" width="17.24" height="4.78" fill="#471a6c"/><rect x="500.93" y="606.75" width="17.24" height="4.78" fill="#461769"/><rect x="517.87" y="606.75" width="17.24" height="4.78" fill="#471c6e"/><rect x="534.81" y="606.75" width="17.24" height="4.78" fill="#472a79"/><rect x="551.75" y="606.75" width="17.24" height="4.78" fill="#45317c"/><rect x="568.70" y="606.75" width="17.24" height="4.78" fill="#3f4988"/><rect x="585.64" y="606.75" width="17.24" height="4.78" fill="#3f4988"/><rect x="602.58" y="606.75" width="17.24" height="4.78" fill="#3b518a"/><rect x="619.52" y="606.75" width="17.24" height="4.78" fill="#3e4a88"/><rect x="636.47" y="606.75" width="17.24" height="4.78" fill="#404687"/><rect x="653.41" y="606.75" width="17.24" height="4.78" fill="#45317c"/><rect x="670.35" y="606.75" width="17.24" height="4.78" fill="#472a79"/><rect x="687.30" y="606.75" width="17.24" height="4.78" fill="#461769"/><rect x="704.24" y="606.75" width="17.24" height="4.78" fill="#461163"/><rect x="721.18" y="606.75" width="17.24" height="4.78" fill="#461164"/><rect x="738.12" y="606.75" width="17.24" height="4.78" fill="#450e60"/><rect x="755.07" y="606.75" width="17.24" height="4.78" fill="#47196a"/><rect x="772.01" y="606.75" width="17.24" height="4.78" fill="#423e84"/><rect x="788.95" y="606.75" width="17.24" height="4.78" fill="#375b8c"/><rect x="805.89" y="606.75" width="17.24" height="4.78" fill="#2b768e"/><rect x="822.84" y="606.75" width="17.24" height="4.78" fill="#24898d"/><rect x="839.78" y="606.75" width="17.24" height="4.78" fill="#21928c"/><rect x="856.72" y="606.75" width="17.24" height="4.78" fill="#238c8c"/><rect x="873.66" y="606.75" width="17.24" height="4.78" fill="#297c8e"/><rect x="890.61" y="606.75" width="17.24" height="4.78" fill="#34628d"/><rect x="907.55" y="606.75" width="17.24" height="4.78" fill="#404687"/><rect x="924.49" y="606.75" width="17.24" height="4.78" fill="#414387"/><rect x="941.43" y="606.75" width="17.24" height="4.78" fill="#414387"/><rect x="958.38" y="606.75" width="17.24" height="4.78" fill="#45337d"/><rect x="975.32" y="606.75" width="17.24" height="4.78" fill="#462f7b"/><rect x="992.26" y="606.75" width="17.24" height="4.78" fill="#472978"/><rect x="1009.20" y="606.75" width="17.24" height="4.78" fill="#462e7a"/><rect x="1026.14" y="606.75" width="17.24" height="4.78" fill="#45337d"/><rect x="1043.09" y="606.75" width="17.24" height="4.78" fill="#45337d"/><rect x="1060.03" y="606.75" width="17.24" height="4.78" fill="#462f7b"/><rect x="1076.97" y="606.75" width="17.24" height="4.78" fill="#462c79"/><rect x="1093.91" y="606.75" width="17.24" height="4.78" fill="#471a6c"/><rect x="1110.86" y="606.75" width="17.24" height="4.78" fill="#461365"/><rect x="450.10" y="611.23" width="17.24" height="4.78" fill="#450659"/><rect x="467.04" y="611.23" width="17.24" height="4.78" fill="#45095c"/><rect x="483.99" y="611.23" width="17.24" height="4.78" fill="#461264"/><rect x="500.93" y="611.23" width="17.24" height="4.78" fill="#450c5f"/><rect x="517.87" y="611.23" width="17.24" height="4.78" fill="#461063"/><rect x="534.81" y="611.23" width="17.24" height="4.78" fill="#45095c"/><rect x="551.75" y="611.23" width="17.24" height="4.78" fill="#440558"/><rect x="568.70" y="611.23" width="17.24" height="4.78" fill="#440558"/><rect x="585.64" y="611.23" width="17.24" height="4.78" fill="#461264"/><rect x="602.58" y="611.23" width="17.24" height="4.78" fill="#450d60"/><rect x="619.52" y="611.23" width="17.24" height="4.78" fill="#450659"/><rect x="636.47" y="611.23" width="17.24" height="4.78" fill="#440154"/><rect x="653.41" y="611.23" width="17.24" height="4.78" fill="#450a5c"/><rect x="670.35" y="611.23" width="17.24" height="4.78" fill="#450d5f"/><rect x="687.30" y="611.23" width="17.24" height="4.78" fill="#45085b"/><rect x="704.24" y="611.23" width="17.24" height="4.78" fill="#450658"/><rect x="721.18" y="611.23" width="17.24" height="4.78" fill="#450d5f"/><rect x="738.12" y="611.23" width="17.24" height="4.78" fill="#461163"/><rect x="755.07" y="611.23" width="17.24" height="4.78" fill="#440558"/><rect x="772.01" y="611.23" width="17.24" height="4.78" fill="#440255"/><rect x="788.95" y="611.23" width="17.24" height="4.78" fill="#45075a"/><rect x="805.89" y="611.23" width="17.24" height="4.78" fill="#45085b"/><rect x="822.84" y="611.23" width="17.24" height="4.78" fill="#450d5f"/><rect x="839.78" y="611.23" width="17.24" height="4.78" fill="#440457"/><rect x="856.72" y="611.23" width="17.24" height="4.78" fill="#460f61"/><rect x="873.66" y="611.23" width="17.24" height="4.78" fill="#450e60"/><rect x="890.61" y="611.23" width="17.24" height="4.78" fill="#450a5c"/><rect x="907.55" y="611.23" width="17.24" height="4.78" fill="#440557"/><rect x="924.49" y="611.23" width="17.24" height="4.78" fill="#461264"/><rect x="941.43" y="611.23" width="17.24" height="4.78" fill="#450659"/><rect x="958.38" y="611.23" width="17.24" height="4.78" fill="#460f62"/><rect x="975.32" y="611.23" width="17.24" height="4.78" fill="#440558"/><rect x="992.26" y="611.23" width="17.24" height="4.78" fill="#440558"/><rect x="1009.20" y="611.23" width="17.24" height="4.78" fill="#460e61"/><rect x="1026.14" y="611.23" width="17.24" height="4.78" fill="#450659"/><rect x="1043.09" y="611.23" width="17.24" height="4.78" fill="#461264"/><rect x="1060.03" y="611.23" width="17.24" height="4.78" fill="#450a5c"/><rect x="1076.97" y="611.23" width="17.24" height="4.78" fill="#440457"/><rect x="1093.91" y="611.23" width="17.24" height="4.78" fill="#440558"/><rect x="1110.86" y="611.23" width="17.24" height="4.78" fill="#45085b"/><rect x="450.10" y="615.72" width="17.24" height="4.78" fill="#450d5f"/><rect x="467.04" y="615.72" width="17.24" height="4.78" fill="#461264"/><rect x="483.99" y="615.72" width="17.24" height="4.78" fill="#440456"/><rect x="500.93" y="615.72" width="17.24" height="4.78" fill="#45085a"/><rect x="517.87" y="615.72" width="17.24" height="4.78" fill="#440558"/><rect x="534.81" y="615.72" width="17.24" height="4.78" fill="#461264"/><rect x="551.75" y="615.72" width="17.24" height="4.78" fill="#440356"/><rect x="568.70" y="615.72" width="17.24" height="4.78" fill="#440255"/><rect x="585.64" y="615.72" width="17.24" height="4.78" fill="#440255"/><rect x="602.58" y="615.72" width="17.24" height="4.78" fill="#45085a"/><rect x="619.52" y="615.72" width="17.24" height="4.78" fill="#461163"/><rect x="636.47" y="615.72" width="17.24" height="4.78" fill="#461063"/><rect x="653.41" y="615.72" width="17.24" height="4.78" fill="#450e60"/><rect x="670.35" y="615.72" width="17.24" height="4.78" fill="#461264"/><rect x="687.30" y="615.72" width="17.24" height="4.78" fill="#461163"/><rect x="704.24" y="615.72" width="17.24" height="4.78" fill="#450759"/><rect x="721.18" y="615.72" width="17.24" height="4.78" fill="#440457"/><rect x="738.12" y="615.72" width="17.24" height="4.78" fill="#461163"/><rect x="755.07" y="615.72" width="17.24" height="4.78" fill="#450e60"/><rect x="772.01" y="615.72" width="17.24" height="4.78" fill="#440255"/><rect x="788.95" y="615.72" width="17.24" height="4.78" fill="#450d5f"/><rect x="805.89" y="615.72" width="17.24" height="4.78" fill="#45085a"/><rect x="822.84" y="615.72" width="17.24" height="4.78" fill="#45085a"/><rect x="839.78" y="615.72" width="17.24" height="4.78" fill="#450759"/><rect x="856.72" y="615.72" width="17.24" height="4.78" fill="#440457"/><rect x="873.66" y="615.72" width="17.24" height="4.78" fill="#440154"/><rect x="890.61" y="615.72" width="17.24" height="4.78" fill="#450659"/><rect x="907.55" y="615.72" width="17.24" height="4.78" fill="#45075a"/><rect x="924.49" y="615.72" width="17.24" height="4.78" fill="#461264"/><rect x="941.43" y="615.72" width="17.24" height="4.78" fill="#440356"/><rect x="958.38" y="615.72" width="17.24" height="4.78" fill="#461264"/><rect x="975.32" y="615.72" width="17.24" height="4.78" fill="#440557"/><rect x="992.26" y="615.72" width="17.24" height="4.78" fill="#45075a"/><rect x="1009.20" y="615.72" width="17.24" height="4.78" fill="#460f62"/><rect x="1026.14" y="615.72" width="17.24" height="4.78" fill="#460f62"/><rect x="1043.09" y="615.72" width="17.24" height="4.78" fill="#45095b"/><rect x="1060.03" y="615.72" width="17.24" height="4.78" fill="#440255"/><rect x="1076.97" y="615.72" width="17.24" height="4.78" fill="#45095c"/><rect x="1093.91" y="615.72" width="17.24" height="4.78" fill="#45085a"/><rect x="1110.86" y="615.72" width="17.24" height="4.78" fill="#461163"/><rect x="450.10" y="620.20" width="17.24" height="4.78" fill="#440457"/><rect x="467.04" y="620.20" width="17.24" height="4.78" fill="#45075a"/><rect x="483.99" y="620.20" width="17.24" height="4.78" fill="#461163"/><rect x="500.93" y="620.20" width="17.24" height="4.78" fill="#440254"/><rect x="517.87" y="620.20" width="17.24" height="4.78" fill="#45085b"/><rect x="534.81" y="620.20" width="17.24" height="4.78" fill="#460f61"/><rect x="551.75" y="620.20" width="17.24" height="4.78" fill="#460e61"/><rect x="568.70" y="620.20" width="17.24" height="4.78" fill="#440255"/><rect x="585.64" y="620.20" width="17.24" height="4.78" fill="#440255"/><rect x="602.58" y="620.20" width="17.24" height="4.78" fill="#440255"/><rect x="619.52" y="620.20" width="17.24" height="4.78" fill="#461163"/><rect x="636.47" y="620.20" width="17.24" height="4.78" fill="#450558"/><rect x="653.41" y="620.20" width="17.24" height="4.78" fill="#450e60"/><rect x="670.35" y="620.20" width="17.24" height="4.78" fill="#461163"/><rect x="687.30" y="620.20" width="17.24" height="4.78" fill="#45075a"/><rect x="704.24" y="620.20" width="17.24" height="4.78" fill="#450658"/><rect x="721.18" y="620.20" width="17.24" height="4.78" fill="#461264"/><rect x="738.12" y="620.20" width="17.24" height="4.78" fill="#450c5e"/><rect x="755.07" y="620.20" width="17.24" height="4.78" fill="#450658"/><rect x="772.01" y="620.20" width="17.24" height="4.78" fill="#450e60"/><rect x="788.95" y="620.20" width="17.24" height="4.78" fill="#450759"/><rect x="805.89" y="620.20" width="17.24" height="4.78" fill="#450659"/><rect x="822.84" y="620.20" width="17.24" height="4.78" fill="#440154"/><rect x="839.78" y="620.20" width="17.24" height="4.78" fill="#460e60"/><rect x="856.72" y="620.20" width="17.24" height="4.78" fill="#461163"/><rect x="873.66" y="620.20" width="17.24" height="4.78" fill="#450c5e"/><rect x="890.61" y="620.20" width="17.24" height="4.78" fill="#461264"/><rect x="907.55" y="620.20" width="17.24" height="4.78" fill="#440154"/><rect x="924.49" y="620.20" width="17.24" height="4.78" fill="#440558"/><rect x="941.43" y="620.20" width="17.24" height="4.78" fill="#45095c"/><rect x="958.38" y="620.20" width="17.24" height="4.78" fill="#461264"/><rect x="975.32" y="620.20" width="17.24" height="4.78" fill="#461264"/><rect x="992.26" y="620.20" width="17.24" height="4.78" fill="#45085a"/><rect x="1009.20" y="620.20" width="17.24" height="4.78" fill="#450558"/><rect x="1026.14" y="620.20" width="17.24" height="4.78" fill="#45095b"/><rect x="1043.09" y="620.20" width="17.24" height="4.78" fill="#450a5c"/><rect x="1060.03" y="620.20" width="17.24" height="4.78" fill="#461163"/><rect x="1076.97" y="620.20" width="17.24" height="4.78" fill="#440457"/><rect x="1093.91" y="620.20" width="17.24" height="4.78" fill="#460f61"/><rect x="1110.86" y="620.20" width="17.24" height="4.78" fill="#450e60"/><rect x="450.10" y="624.69" width="17.24" height="4.78" fill="#460f62"/><rect x="467.04" y="624.69" width="17.24" height="4.78" fill="#460f61"/><rect x="483.99" y="624.69" width="17.24" height="4.78" fill="#450c5e"/><rect x="500.93" y="624.69" width="17.24" height="4.78" fill="#450759"/><rect x="517.87" y="624.69" width="17.24" height="4.78" fill="#450759"/><rect x="534.81" y="624.69" width="17.24" height="4.78" fill="#45075a"/><rect x="551.75" y="624.69" width="17.24" height="4.78" fill="#460f61"/><rect x="568.70" y="624.69" width="17.24" height="4.78" fill="#440255"/><rect x="585.64" y="624.69" width="17.24" height="4.78" fill="#440457"/><rect x="602.58" y="624.69" width="17.24" height="4.78" fill="#460e60"/><rect x="619.52" y="624.69" width="17.24" height="4.78" fill="#440558"/><rect x="636.47" y="624.69" width="17.24" height="4.78" fill="#440255"/><rect x="653.41" y="624.69" width="17.24" height="4.78" fill="#440255"/><rect x="670.35" y="624.69" width="17.24" height="4.78" fill="#450b5d"/><rect x="687.30" y="624.69" width="17.24" height="4.78" fill="#450759"/><rect x="704.24" y="624.69" width="17.24" height="4.78" fill="#461264"/><rect x="721.18" y="624.69" width="17.24" height="4.78" fill="#461063"/><rect x="738.12" y="624.69" width="17.24" height="4.78" fill="#461264"/><rect x="755.07" y="624.69" width="17.24" height="4.78" fill="#450658"/><rect x="772.01" y="624.69" width="17.24" height="4.78" fill="#440255"/><rect x="788.95" y="624.69" width="17.24" height="4.78" fill="#440356"/><rect x="805.89" y="624.69" width="17.24" height="4.78" fill="#450a5c"/><rect x="822.84" y="624.69" width="17.24" height="4.78" fill="#450d60"/><rect x="839.78" y="624.69" width="17.24" height="4.78" fill="#45095b"/><rect x="856.72" y="624.69" width="17.24" height="4.78" fill="#440558"/><rect x="873.66" y="624.69" width="17.24" height="4.78" fill="#45085b"/><rect x="890.61" y="624.69" width="17.24" height="4.78" fill="#450c5e"/><rect x="907.55" y="624.69" width="17.24" height="4.78" fill="#450d5f"/><rect x="924.49" y="624.69" width="17.24" height="4.78" fill="#450e60"/><rect x="941.43" y="624.69" width="17.24" height="4.78" fill="#461062"/><rect x="958.38" y="624.69" width="17.24" height="4.78" fill="#450d5f"/><rect x="975.32" y="624.69" width="17.24" height="4.78" fill="#440356"/><rect x="992.26" y="624.69" width="17.24" height="4.78" fill="#461062"/><rect x="1009.20" y="624.69" width="17.24" height="4.78" fill="#450659"/><rect x="1026.14" y="624.69" width="17.24" height="4.78" fill="#450b5d"/><rect x="1043.09" y="624.69" width="17.24" height="4.78" fill="#45085a"/><rect x="1060.03" y="624.69" width="17.24" height="4.78" fill="#450e60"/><rect x="1076.97" y="624.69" width="17.24" height="4.78" fill="#440457"/><rect x="1093.91" y="624.69" width="17.24" height="4.78" fill="#440558"/><rect x="1110.86" y="624.69" width="17.24" height="4.78" fill="#440558"/><rect x="450.10" y="629.17" width="17.24" height="4.78" fill="#440457"/><rect x="467.04" y="629.17" width="17.24" height="4.78" fill="#461063"/><rect x="483.99" y="629.17" width="17.24" height="4.78" fill="#450b5e"/><rect x="500.93" y="629.17" width="17.24" height="4.78" fill="#450759"/><rect x="517.87" y="629.17" width="17.24" height="4.78" fill="#45085b"/><rect x="534.81" y="629.17" width="17.24" height="4.78" fill="#461264"/><rect x="551.75" y="629.17" width="17.24" height="4.78" fill="#450a5c"/><rect x="568.70" y="629.17" width="17.24" height="4.78" fill="#440558"/><rect x="585.64" y="629.17" width="17.24" height="4.78" fill="#460f61"/><rect x="602.58" y="629.17" width="17.24" height="4.78" fill="#450c5f"/><rect x="619.52" y="629.17" width="17.24" height="4.78" fill="#461264"/><rect x="636.47" y="629.17" width="17.24" height="4.78" fill="#440356"/><rect x="653.41" y="629.17" width="17.24" height="4.78" fill="#45095c"/><rect x="670.35" y="629.17" width="17.24" height="4.78" fill="#460f62"/><rect x="687.30" y="629.17" width="17.24" height="4.78" fill="#461062"/><rect x="704.24" y="629.17" width="17.24" height="4.78" fill="#461163"/><rect x="721.18" y="629.17" width="17.24" height="4.78" fill="#440255"/><rect x="738.12" y="629.17" width="17.24" height="4.78" fill="#450659"/><rect x="755.07" y="629.17" width="17.24" height="4.78" fill="#440356"/><rect x="772.01" y="629.17" width="17.24" height="4.78" fill="#440457"/><rect x="788.95" y="629.17" width="17.24" height="4.78" fill="#461264"/><rect x="805.89" y="629.17" width="17.24" height="4.78" fill="#450b5e"/><rect x="822.84" y="629.17" width="17.24" height="4.78" fill="#461163"/><rect x="839.78" y="629.17" width="17.24" height="4.78" fill="#45085a"/><rect x="856.72" y="629.17" width="17.24" height="4.78" fill="#461062"/><rect x="873.66" y="629.17" width="17.24" height="4.78" fill="#45095b"/><rect x="890.61" y="629.17" width="17.24" height="4.78" fill="#450658"/><rect x="907.55" y="629.17" width="17.24" height="4.78" fill="#460f61"/><rect x="924.49" y="629.17" width="17.24" height="4.78" fill="#461264"/><rect x="941.43" y="629.17" width="17.24" height="4.78" fill="#440356"/><rect x="958.38" y="629.17" width="17.24" height="4.78" fill="#450b5e"/><rect x="975.32" y="629.17" width="17.24" height="4.78" fill="#450c5e"/><rect x="992.26" y="629.17" width="17.24" height="4.78" fill="#440558"/><rect x="1009.20" y="629.17" width="17.24" height="4.78" fill="#45075a"/><rect x="1026.14" y="629.17" width="17.24" height="4.78" fill="#440356"/><rect x="1043.09" y="629.17" width="17.24" height="4.78" fill="#440557"/><rect x="1060.03" y="629.17" width="17.24" height="4.78" fill="#450558"/><rect x="1076.97" y="629.17" width="17.24" height="4.78" fill="#450b5e"/><rect x="1093.91" y="629.17" width="17.24" height="4.78" fill="#450c5f"/><rect x="1110.86" y="629.17" width="17.24" height="4.78" fill="#440557"/><rect x="450.10" y="633.66" width="17.24" height="4.78" fill="#440154"/><rect x="467.04" y="633.66" width="17.24" height="4.78" fill="#450759"/><rect x="483.99" y="633.66" width="17.24" height="4.78" fill="#450d5f"/><rect x="500.93" y="633.66" width="17.24" height="4.78" fill="#440457"/><rect x="517.87" y="633.66" width="17.24" height="4.78" fill="#450659"/><rect x="534.81" y="633.66" width="17.24" height="4.78" fill="#440557"/><rect x="551.75" y="633.66" width="17.24" height="4.78" fill="#460f61"/><rect x="568.70" y="633.66" width="17.24" height="4.78" fill="#450b5d"/><rect x="585.64" y="633.66" width="17.24" height="4.78" fill="#440255"/><rect x="602.58" y="633.66" width="17.24" height="4.78" fill="#440356"/><rect x="619.52" y="633.66" width="17.24" height="4.78" fill="#45085b"/><rect x="636.47" y="633.66" width="17.24" height="4.78" fill="#450b5d"/><rect x="653.41" y="633.66" width="17.24" height="4.78" fill="#450c5f"/><rect x="670.35" y="633.66" width="17.24" height="4.78" fill="#440356"/><rect x="687.30" y="633.66" width="17.24" height="4.78" fill="#440457"/><rect x="704.24" y="633.66" width="17.24" height="4.78" fill="#450d5f"/><rect x="721.18" y="633.66" width="17.24" height="4.78" fill="#45085b"/><rect x="738.12" y="633.66" width="17.24" height="4.78" fill="#450659"/><rect x="755.07" y="633.66" width="17.24" height="4.78" fill="#450659"/><rect x="772.01" y="633.66" width="17.24" height="4.78" fill="#461264"/><rect x="788.95" y="633.66" width="17.24" height="4.78" fill="#450659"/><rect x="805.89" y="633.66" width="17.24" height="4.78" fill="#450b5d"/><rect x="822.84" y="633.66" width="17.24" height="4.78" fill="#45075a"/><rect x="839.78" y="633.66" width="17.24" height="4.78" fill="#45085b"/><rect x="856.72" y="633.66" width="17.24" height="4.78" fill="#461062"/><rect x="873.66" y="633.66" width="17.24" height="4.78" fill="#461264"/><rect x="890.61" y="633.66" width="17.24" height="4.78" fill="#45075a"/><rect x="907.55" y="633.66" width="17.24" height="4.78" fill="#440457"/><rect x="924.49" y="633.66" width="17.24" height="4.78" fill="#450e60"/><rect x="941.43" y="633.66" width="17.24" height="4.78" fill="#440557"/><rect x="958.38" y="633.66" width="17.24" height="4.78" fill="#440154"/><rect x="975.32" y="633.66" width="17.24" height="4.78" fill="#461163"/><rect x="992.26" y="633.66" width="17.24" height="4.78" fill="#45085b"/><rect x="1009.20" y="633.66" width="17.24" height="4.78" fill="#460f62"/><rect x="1026.14" y="633.66" width="17.24" height="4.78" fill="#45085b"/><rect x="1043.09" y="633.66" width="17.24" height="4.78" fill="#461063"/><rect x="1060.03" y="633.66" width="17.24" height="4.78" fill="#45095c"/><rect x="1076.97" y="633.66" width="17.24" height="4.78" fill="#440457"/><rect x="1093.91" y="633.66" width="17.24" height="4.78" fill="#440154"/><rect x="1110.86" y="633.66" width="17.24" height="4.78" fill="#450b5d"/><rect x="450.10" y="638.14" width="17.24" height="4.78" fill="#450c5f"/><rect x="467.04" y="638.14" width="17.24" height="4.78" fill="#461163"/><rect x="483.99" y="638.14" width="17.24" height="4.78" fill="#440355"/><rect x="500.93" y="638.14" width="17.24" height="4.78" fill="#450c5e"/><rect x="517.87" y="638.14" width="17.24" height="4.78" fill="#45075a"/><rect x="534.81" y="638.14" width="17.24" height="4.78" fill="#450a5c"/><rect x="551.75" y="638.14" width="17.24" height="4.78" fill="#440456"/><rect x="568.70" y="638.14" width="17.24" height="4.78" fill="#450659"/><rect x="585.64" y="638.14" width="17.24" height="4.78" fill="#450a5d"/><rect x="602.58" y="638.14" width="17.24" height="4.78" fill="#461163"/><rect x="619.52" y="638.14" width="17.24" height="4.78" fill="#440356"/><rect x="636.47" y="638.14" width="17.24" height="4.78" fill="#450a5c"/><rect x="653.41" y="638.14" width="17.24" height="4.78" fill="#460f61"/><rect x="670.35" y="638.14" width="17.24" height="4.78" fill="#461264"/><rect x="687.30" y="638.14" width="17.24" height="4.78" fill="#440457"/><rect x="704.24" y="638.14" width="17.24" height="4.78" fill="#440356"/><rect x="721.18" y="638.14" width="17.24" height="4.78" fill="#461264"/><rect x="738.12" y="638.14" width="17.24" height="4.78" fill="#461264"/><rect x="755.07" y="638.14" width="17.24" height="4.78" fill="#45095c"/><rect x="772.01" y="638.14" width="17.24" height="4.78" fill="#440255"/><rect x="788.95" y="638.14" width="17.24" height="4.78" fill="#461163"/><rect x="805.89" y="638.14" width="17.24" height="4.78" fill="#45085a"/><rect x="822.84" y="638.14" width="17.24" height="4.78" fill="#461163"/><rect x="839.78" y="638.14" width="17.24" height="4.78" fill="#450c5e"/><rect x="856.72" y="638.14" width="17.24" height="4.78" fill="#460f62"/><rect x="873.66" y="638.14" width="17.24" height="4.78" fill="#440457"/><rect x="890.61" y="638.14" width="17.24" height="4.78" fill="#460f61"/><rect x="907.55" y="638.14" width="17.24" height="4.78" fill="#440558"/><rect x="924.49" y="638.14" width="17.24" height="4.78" fill="#45085b"/><rect x="941.43" y="638.14" width="17.24" height="4.78" fill="#461062"/><rect x="958.38" y="638.14" width="17.24" height="4.78" fill="#461062"/><rect x="975.32" y="638.14" width="17.24" height="4.78" fill="#440457"/><rect x="992.26" y="638.14" width="17.24" height="4.78" fill="#440558"/><rect x="1009.20" y="638.14" width="17.24" height="4.78" fill="#45085b"/><rect x="1026.14" y="638.14" width="17.24" height="4.78" fill="#450a5d"/><rect x="1043.09" y="638.14" width="17.24" height="4.78" fill="#45085a"/><rect x="1060.03" y="638.14" width="17.24" height="4.78" fill="#440356"/><rect x="1076.97" y="638.14" width="17.24" height="4.78" fill="#440558"/><rect x="1093.91" y="638.14" width="17.24" height="4.78" fill="#450e60"/><rect x="1110.86" y="638.14" width="17.24" height="4.78" fill="#461163"/><rect x="450.10" y="642.62" width="17.24" height="4.78" fill="#440255"/><rect x="467.04" y="642.62" width="17.24" height="4.78" fill="#450b5d"/><rect x="483.99" y="642.62" width="17.24" height="4.78" fill="#460e60"/><rect x="500.93" y="642.62" width="17.24" height="4.78" fill="#440255"/><rect x="517.87" y="642.62" width="17.24" height="4.78" fill="#461062"/><rect x="534.81" y="642.62" width="17.24" height="4.78" fill="#440356"/><rect x="551.75" y="642.62" width="17.24" height="4.78" fill="#450b5e"/><rect x="568.70" y="642.62" width="17.24" height="4.78" fill="#450b5d"/><rect x="585.64" y="642.62" width="17.24" height="4.78" fill="#450c5e"/><rect x="602.58" y="642.62" width="17.24" height="4.78" fill="#450659"/><rect x="619.52" y="642.62" width="17.24" height="4.78" fill="#45085b"/><rect x="636.47" y="642.62" width="17.24" height="4.78" fill="#450b5e"/><rect x="653.41" y="642.62" width="17.24" height="4.78" fill="#45085b"/><rect x="670.35" y="642.62" width="17.24" height="4.78" fill="#450d5f"/><rect x="687.30" y="642.62" width="17.24" height="4.78" fill="#45095b"/><rect x="704.24" y="642.62" width="17.24" height="4.78" fill="#45095b"/><rect x="721.18" y="642.62" width="17.24" height="4.78" fill="#440154"/><rect x="738.12" y="642.62" width="17.24" height="4.78" fill="#450c5e"/><rect x="755.07" y="642.62" width="17.24" height="4.78" fill="#450a5c"/><rect x="772.01" y="642.62" width="17.24" height="4.78" fill="#440558"/><rect x="788.95" y="642.62" width="17.24" height="4.78" fill="#460e61"/><rect x="805.89" y="642.62" width="17.24" height="4.78" fill="#460f61"/><rect x="822.84" y="642.62" width="17.24" height="4.78" fill="#45095c"/><rect x="839.78" y="642.62" width="17.24" height="4.78" fill="#440457"/><rect x="856.72" y="642.62" width="17.24" height="4.78" fill="#45095c"/><rect x="873.66" y="642.62" width="17.24" height="4.78" fill="#440356"/><rect x="890.61" y="642.62" width="17.24" height="4.78" fill="#440356"/><rect x="907.55" y="642.62" width="17.24" height="4.78" fill="#45095b"/><rect x="924.49" y="642.62" width="17.24" height="4.78" fill="#440356"/><rect x="941.43" y="642.62" width="17.24" height="4.78" fill="#45095b"/><rect x="958.38" y="642.62" width="17.24" height="4.78" fill="#450a5c"/><rect x="975.32" y="642.62" width="17.24" height="4.78" fill="#440255"/><rect x="992.26" y="642.62" width="17.24" height="4.78" fill="#450c5f"/><rect x="1009.20" y="642.62" width="17.24" height="4.78" fill="#440255"/><rect x="1026.14" y="642.62" width="17.24" height="4.78" fill="#450e60"/><rect x="1043.09" y="642.62" width="17.24" height="4.78" fill="#460f61"/><rect x="1060.03" y="642.62" width="17.24" height="4.78" fill="#450a5c"/><rect x="1076.97" y="642.62" width="17.24" height="4.78" fill="#440255"/><rect x="1093.91" y="642.62" width="17.24" height="4.78" fill="#450a5c"/><rect x="1110.86" y="642.62" width="17.24" height="4.78" fill="#45085a"/><rect x="450.10" y="647.11" width="17.24" height="4.78" fill="#461264"/><rect x="467.04" y="647.11" width="17.24" height="4.78" fill="#440356"/><rect x="483.99" y="647.11" width="17.24" height="4.78" fill="#461062"/><rect x="500.93" y="647.11" width="17.24" height="4.78" fill="#461264"/><rect x="517.87" y="647.11" width="17.24" height="4.78" fill="#450e60"/><rect x="534.81" y="647.11" width="17.24" height="4.78" fill="#460f61"/><rect x="551.75" y="647.11" width="17.24" height="4.78" fill="#440457"/><rect x="568.70" y="647.11" width="17.24" height="4.78" fill="#461264"/><rect x="585.64" y="647.11" width="17.24" height="4.78" fill="#450a5c"/><rect x="602.58" y="647.11" width="17.24" height="4.78" fill="#461264"/><rect x="619.52" y="647.11" width="17.24" height="4.78" fill="#461163"/><rect x="636.47" y="647.11" width="17.24" height="4.78" fill="#440457"/><rect x="653.41" y="647.11" width="17.24" height="4.78" fill="#460f61"/><rect x="670.35" y="647.11" width="17.24" height="4.78" fill="#461163"/><rect x="687.30" y="647.11" width="17.24" height="4.78" fill="#440255"/><rect x="704.24" y="647.11" width="17.24" height="4.78" fill="#45075a"/><rect x="721.18" y="647.11" width="17.24" height="4.78" fill="#460e60"/><rect x="738.12" y="647.11" width="17.24" height="4.78" fill="#440457"/><rect x="755.07" y="647.11" width="17.24" height="4.78" fill="#461163"/><rect x="772.01" y="647.11" width="17.24" height="4.78" fill="#450659"/><rect x="788.95" y="647.11" width="17.24" height="4.78" fill="#460f61"/><rect x="805.89" y="647.11" width="17.24" height="4.78" fill="#440456"/><rect x="822.84" y="647.11" width="17.24" height="4.78" fill="#450a5c"/><rect x="839.78" y="647.11" width="17.24" height="4.78" fill="#461163"/><rect x="856.72" y="647.11" width="17.24" height="4.78" fill="#440557"/><rect x="873.66" y="647.11" width="17.24" height="4.78" fill="#450658"/><rect x="890.61" y="647.11" width="17.24" height="4.78" fill="#450a5c"/><rect x="907.55" y="647.11" width="17.24" height="4.78" fill="#450759"/><rect x="924.49" y="647.11" width="17.24" height="4.78" fill="#440255"/><rect x="941.43" y="647.11" width="17.24" height="4.78" fill="#440457"/><rect x="958.38" y="647.11" width="17.24" height="4.78" fill="#440457"/><rect x="975.32" y="647.11" width="17.24" height="4.78" fill="#461163"/><rect x="992.26" y="647.11" width="17.24" height="4.78" fill="#450d5f"/><rect x="1009.20" y="647.11" width="17.24" height="4.78" fill="#461163"/><rect x="1026.14" y="647.11" width="17.24" height="4.78" fill="#440457"/><rect x="1043.09" y="647.11" width="17.24" height="4.78" fill="#460f61"/><rect x="1060.03" y="647.11" width="17.24" height="4.78" fill="#440356"/><rect x="1076.97" y="647.11" width="17.24" height="4.78" fill="#450a5d"/><rect x="1093.91" y="647.11" width="17.24" height="4.78" fill="#450c5e"/><rect x="1110.86" y="647.11" width="17.24" height="4.78" fill="#45075a"/><rect x="450.10" y="651.59" width="17.24" height="4.78" fill="#461062"/><rect x="467.04" y="651.59" width="17.24" height="4.78" fill="#450b5d"/><rect x="483.99" y="651.59" width="17.24" height="4.78" fill="#450b5e"/><rect x="500.93" y="651.59" width="17.24" height="4.78" fill="#461063"/><rect x="517.87" y="651.59" width="17.24" height="4.78" fill="#440356"/><rect x="534.81" y="651.59" width="17.24" height="4.78" fill="#461264"/><rect x="551.75" y="651.59" width="17.24" height="4.78" fill="#450c5e"/><rect x="568.70" y="651.59" width="17.24" height="4.78" fill="#45085b"/><rect x="585.64" y="651.59" width="17.24" height="4.78" fill="#460f61"/><rect x="602.58" y="651.59" width="17.24" height="4.78" fill="#450658"/><rect x="619.52" y="651.59" width="17.24" height="4.78" fill="#461264"/><rect x="636.47" y="651.59" width="17.24" height="4.78" fill="#450b5e"/><rect x="653.41" y="651.59" width="17.24" height="4.78" fill="#45075a"/><rect x="670.35" y="651.59" width="17.24" height="4.78" fill="#460e61"/><rect x="687.30" y="651.59" width="17.24" height="4.78" fill="#45095b"/><rect x="704.24" y="651.59" width="17.24" height="4.78" fill="#440457"/><rect x="721.18" y="651.59" width="17.24" height="4.78" fill="#450e60"/><rect x="738.12" y="651.59" width="17.24" height="4.78" fill="#440255"/><rect x="755.07" y="651.59" width="17.24" height="4.78" fill="#460f62"/><rect x="772.01" y="651.59" width="17.24" height="4.78" fill="#450558"/><rect x="788.95" y="651.59" width="17.24" height="4.78" fill="#450c5f"/><rect x="805.89" y="651.59" width="17.24" height="4.78" fill="#461264"/><rect x="822.84" y="651.59" width="17.24" height="4.78" fill="#450b5e"/><rect x="839.78" y="651.59" width="17.24" height="4.78" fill="#450d5f"/><rect x="856.72" y="651.59" width="17.24" height="4.78" fill="#450659"/><rect x="873.66" y="651.59" width="17.24" height="4.78" fill="#440154"/><rect x="890.61" y="651.59" width="17.24" height="4.78" fill="#440255"/><rect x="907.55" y="651.59" width="17.24" height="4.78" fill="#440456"/><rect x="924.49" y="651.59" width="17.24" height="4.78" fill="#450c5e"/><rect x="941.43" y="651.59" width="17.24" height="4.78" fill="#45095b"/><rect x="958.38" y="651.59" width="17.24" height="4.78" fill="#450a5c"/><rect x="975.32" y="651.59" width="17.24" height="4.78" fill="#461163"/><rect x="992.26" y="651.59" width="17.24" height="4.78" fill="#440356"/><rect x="1009.20" y="651.59" width="17.24" height="4.78" fill="#440558"/><rect x="1026.14" y="651.59" width="17.24" height="4.78" fill="#450c5f"/><rect x="1043.09" y="651.59" width="17.24" height="4.78" fill="#440154"/><rect x="1060.03" y="651.59" width="17.24" height="4.78" fill="#440154"/><rect x="1076.97" y="651.59" width="17.24" height="4.78" fill="#45075a"/><rect x="1093.91" y="651.59" width="17.24" height="4.78" fill="#440356"/><rect x="1110.86" y="651.59" width="17.24" height="4.78" fill="#45075a"/><rect x="450.10" y="656.08" width="17.24" height="4.78" fill="#440558"/><rect x="467.04" y="656.08" width="17.24" height="4.78" fill="#450b5e"/><rect x="483.99" y="656.08" width="17.24" height="4.78" fill="#450b5e"/><rect x="500.93" y="656.08" width="17.24" height="4.78" fill="#440557"/><rect x="517.87" y="656.08" width="17.24" height="4.78" fill="#450c5e"/><rect x="534.81" y="656.08" width="17.24" height="4.78" fill="#45095c"/><rect x="551.75" y="656.08" width="17.24" height="4.78" fill="#440356"/><rect x="568.70" y="656.08" width="17.24" height="4.78" fill="#461163"/><rect x="585.64" y="656.08" width="17.24" height="4.78" fill="#440558"/><rect x="602.58" y="656.08" width="17.24" height="4.78" fill="#440456"/><rect x="619.52" y="656.08" width="17.24" height="4.78" fill="#440356"/><rect x="636.47" y="656.08" width="17.24" height="4.78" fill="#450c5f"/><rect x="653.41" y="656.08" width="17.24" height="4.78" fill="#461062"/><rect x="670.35" y="656.08" width="17.24" height="4.78" fill="#460f61"/><rect x="687.30" y="656.08" width="17.24" height="4.78" fill="#45085b"/><rect x="704.24" y="656.08" width="17.24" height="4.78" fill="#450658"/><rect x="721.18" y="656.08" width="17.24" height="4.78" fill="#440154"/><rect x="738.12" y="656.08" width="17.24" height="4.78" fill="#450c5f"/><rect x="755.07" y="656.08" width="17.24" height="4.78" fill="#450b5d"/><rect x="772.01" y="656.08" width="17.24" height="4.78" fill="#45075a"/><rect x="788.95" y="656.08" width="17.24" height="4.78" fill="#450c5f"/><rect x="805.89" y="656.08" width="17.24" height="4.78" fill="#45095b"/><rect x="822.84" y="656.08" width="17.24" height="4.78" fill="#461163"/><rect x="839.78" y="656.08" width="17.24" height="4.78" fill="#450e60"/><rect x="856.72" y="656.08" width="17.24" height="4.78" fill="#440558"/><rect x="873.66" y="656.08" width="17.24" height="4.78" fill="#461163"/><rect x="890.61" y="656.08" width="17.24" height="4.78" fill="#440255"/><rect x="907.55" y="656.08" width="17.24" height="4.78" fill="#450a5d"/><rect x="924.49" y="656.08" width="17.24" height="4.78" fill="#45085b"/><rect x="941.43" y="656.08" width="17.24" height="4.78" fill="#440558"/><rect x="958.38" y="656.08" width="17.24" height="4.78" fill="#440255"/><rect x="975.32" y="656.08" width="17.24" height="4.78" fill="#460f61"/><rect x="992.26" y="656.08" width="17.24" height="4.78" fill="#440154"/><rect x="1009.20" y="656.08" width="17.24" height="4.78" fill="#450b5d"/><rect x="1026.14" y="656.08" width="17.24" height="4.78" fill="#461164"/><rect x="1043.09" y="656.08" width="17.24" height="4.78" fill="#440356"/><rect x="1060.03" y="656.08" width="17.24" height="4.78" fill="#440457"/><rect x="1076.97" y="656.08" width="17.24" height="4.78" fill="#450c5e"/><rect x="1093.91" y="656.08" width="17.24" height="4.78" fill="#450a5c"/><rect x="1110.86" y="656.08" width="17.24" height="4.78" fill="#450c5f"/><rect x="450.10" y="660.56" width="17.24" height="4.78" fill="#460f61"/><rect x="467.04" y="660.56" width="17.24" height="4.78" fill="#440457"/><rect x="483.99" y="660.56" width="17.24" height="4.78" fill="#450659"/><rect x="500.93" y="660.56" width="17.24" height="4.78" fill="#450659"/><rect x="517.87" y="660.56" width="17.24" height="4.78" fill="#440255"/><rect x="534.81" y="660.56" width="17.24" height="4.78" fill="#461163"/><rect x="551.75" y="660.56" width="17.24" height="4.78" fill="#460f61"/><rect x="568.70" y="660.56" width="17.24" height="4.78" fill="#450e60"/><rect x="585.64" y="660.56" width="17.24" height="4.78" fill="#440154"/><rect x="602.58" y="660.56" width="17.24" height="4.78" fill="#461062"/><rect x="619.52" y="660.56" width="17.24" height="4.78" fill="#450e60"/><rect x="636.47" y="660.56" width="17.24" height="4.78" fill="#45095c"/><rect x="653.41" y="660.56" width="17.24" height="4.78" fill="#450e60"/><rect x="670.35" y="660.56" width="17.24" height="4.78" fill="#45095b"/><rect x="687.30" y="660.56" width="17.24" height="4.78" fill="#440558"/><rect x="704.24" y="660.56" width="17.24" height="4.78" fill="#440356"/><rect x="721.18" y="660.56" width="17.24" height="4.78" fill="#440558"/><rect x="738.12" y="660.56" width="17.24" height="4.78" fill="#440255"/><rect x="755.07" y="660.56" width="17.24" height="4.78" fill="#45075a"/><rect x="772.01" y="660.56" width="17.24" height="4.78" fill="#450e60"/><rect x="788.95" y="660.56" width="17.24" height="4.78" fill="#450d5f"/><rect x="805.89" y="660.56" width="17.24" height="4.78" fill="#461062"/><rect x="822.84" y="660.56" width="17.24" height="4.78" fill="#450d60"/><rect x="839.78" y="660.56" width="17.24" height="4.78" fill="#450658"/><rect x="856.72" y="660.56" width="17.24" height="4.78" fill="#450b5d"/><rect x="873.66" y="660.56" width="17.24" height="4.78" fill="#45095b"/><rect x="890.61" y="660.56" width="17.24" height="4.78" fill="#460f61"/><rect x="907.55" y="660.56" width="17.24" height="4.78" fill="#450a5d"/><rect x="924.49" y="660.56" width="17.24" height="4.78" fill="#450658"/><rect x="941.43" y="660.56" width="17.24" height="4.78" fill="#450c5f"/><rect x="958.38" y="660.56" width="17.24" height="4.78" fill="#461264"/><rect x="975.32" y="660.56" width="17.24" height="4.78" fill="#440558"/><rect x="992.26" y="660.56" width="17.24" height="4.78" fill="#461063"/><rect x="1009.20" y="660.56" width="17.24" height="4.78" fill="#440154"/><rect x="1026.14" y="660.56" width="17.24" height="4.78" fill="#450658"/><rect x="1043.09" y="660.56" width="17.24" height="4.78" fill="#440558"/><rect x="1060.03" y="660.56" width="17.24" height="4.78" fill="#450e60"/><rect x="1076.97" y="660.56" width="17.24" height="4.78" fill="#461264"/><rect x="1093.91" y="660.56" width="17.24" height="4.78" fill="#450e60"/><rect x="1110.86" y="660.56" width="17.24" height="4.78" fill="#450759"/><rect x="450.10" y="665.05" width="17.24" height="4.78" fill="#461063"/><rect x="467.04" y="665.05" width="17.24" height="4.78" fill="#450759"/><rect x="483.99" y="665.05" width="17.24" height="4.78" fill="#440558"/><rect x="500.93" y="665.05" width="17.24" height="4.78" fill="#461163"/><rect x="517.87" y="665.05" width="17.24" height="4.78" fill="#450c5e"/><rect x="534.81" y="665.05" width="17.24" height="4.78" fill="#450d5f"/><rect x="551.75" y="665.05" width="17.24" height="4.78" fill="#450d5f"/><rect x="568.70" y="665.05" width="17.24" height="4.78" fill="#461264"/><rect x="585.64" y="665.05" width="17.24" height="4.78" fill="#45095c"/><rect x="602.58" y="665.05" width="17.24" height="4.78" fill="#461062"/><rect x="619.52" y="665.05" width="17.24" height="4.78" fill="#450d60"/><rect x="636.47" y="665.05" width="17.24" height="4.78" fill="#461062"/><rect x="653.41" y="665.05" width="17.24" height="4.78" fill="#45095b"/><rect x="670.35" y="665.05" width="17.24" height="4.78" fill="#450e60"/><rect x="687.30" y="665.05" width="17.24" height="4.78" fill="#450b5d"/><rect x="704.24" y="665.05" width="17.24" height="4.78" fill="#450659"/><rect x="721.18" y="665.05" width="17.24" height="4.78" fill="#440557"/><rect x="738.12" y="665.05" width="17.24" height="4.78" fill="#450c5e"/><rect x="755.07" y="665.05" width="17.24" height="4.78" fill="#440255"/><rect x="772.01" y="665.05" width="17.24" height="4.78" fill="#461163"/><rect x="788.95" y="665.05" width="17.24" height="4.78" fill="#440456"/><rect x="805.89" y="665.05" width="17.24" height="4.78" fill="#440154"/><rect x="822.84" y="665.05" width="17.24" height="4.78" fill="#440356"/><rect x="839.78" y="665.05" width="17.24" height="4.78" fill="#461163"/><rect x="856.72" y="665.05" width="17.24" height="4.78" fill="#45075a"/><rect x="873.66" y="665.05" width="17.24" height="4.78" fill="#440356"/><rect x="890.61" y="665.05" width="17.24" height="4.78" fill="#440254"/><rect x="907.55" y="665.05" width="17.24" height="4.78" fill="#440255"/><rect x="924.49" y="665.05" width="17.24" height="4.78" fill="#450d5f"/><rect x="941.43" y="665.05" width="17.24" height="4.78" fill="#450c5e"/><rect x="958.38" y="665.05" width="17.24" height="4.78" fill="#450d60"/><rect x="975.32" y="665.05" width="17.24" height="4.78" fill="#450e60"/><rect x="992.26" y="665.05" width="17.24" height="4.78" fill="#440255"/><rect x="1009.20" y="665.05" width="17.24" height="4.78" fill="#450b5e"/><rect x="1026.14" y="665.05" width="17.24" height="4.78" fill="#45075a"/><rect x="1043.09" y="665.05" width="17.24" height="4.78" fill="#460f61"/><rect x="1060.03" y="665.05" width="17.24" height="4.78" fill="#460f62"/><rect x="1076.97" y="665.05" width="17.24" height="4.78" fill="#461163"/><rect x="1093.91" y="665.05" width="17.24" height="4.78" fill="#440255"/><rect x="1110.86" y="665.05" width="17.24" height="4.78" fill="#461062"/><rect x="450.10" y="669.53" width="17.24" height="4.78" fill="#461163"/><rect x="467.04" y="669.53" width="17.24" height="4.78" fill="#461264"/><rect x="483.99" y="669.53" width="17.24" height="4.78" fill="#440356"/><rect x="500.93" y="669.53" width="17.24" height="4.78" fill="#440557"/><rect x="517.87" y="669.53" width="17.24" height="4.78" fill="#440356"/><rect x="534.81" y="669.53" width="17.24" height="4.78" fill="#440255"/><rect x="551.75" y="669.53" width="17.24" height="4.78" fill="#461062"/><rect x="568.70" y="669.53" width="17.24" height="4.78" fill="#460f61"/><rect x="585.64" y="669.53" width="17.24" height="4.78" fill="#450c5e"/><rect x="602.58" y="669.53" width="17.24" height="4.78" fill="#460f62"/><rect x="619.52" y="669.53" width="17.24" height="4.78" fill="#450c5e"/><rect x="636.47" y="669.53" width="17.24" height="4.78" fill="#450659"/><rect x="653.41" y="669.53" width="17.24" height="4.78" fill="#440356"/><rect x="670.35" y="669.53" width="17.24" height="4.78" fill="#440356"/><rect x="687.30" y="669.53" width="17.24" height="4.78" fill="#460e60"/><rect x="704.24" y="669.53" width="17.24" height="4.78" fill="#440557"/><rect x="721.18" y="669.53" width="17.24" height="4.78" fill="#450759"/><rect x="738.12" y="669.53" width="17.24" height="4.78" fill="#45085b"/><rect x="755.07" y="669.53" width="17.24" height="4.78" fill="#440154"/><rect x="772.01" y="669.53" width="17.24" height="4.78" fill="#450558"/><rect x="788.95" y="669.53" width="17.24" height="4.78" fill="#450659"/><rect x="805.89" y="669.53" width="17.24" height="4.78" fill="#450e60"/><rect x="822.84" y="669.53" width="17.24" height="4.78" fill="#45075a"/><rect x="839.78" y="669.53" width="17.24" height="4.78" fill="#450759"/><rect x="856.72" y="669.53" width="17.24" height="4.78" fill="#461264"/><rect x="873.66" y="669.53" width="17.24" height="4.78" fill="#450a5c"/><rect x="890.61" y="669.53" width="17.24" height="4.78" fill="#461062"/><rect x="907.55" y="669.53" width="17.24" height="4.78" fill="#450c5e"/><rect x="924.49" y="669.53" width="17.24" height="4.78" fill="#440255"/><rect x="941.43" y="669.53" width="17.24" height="4.78" fill="#45085b"/><rect x="958.38" y="669.53" width="17.24" height="4.78" fill="#45095b"/><rect x="975.32" y="669.53" width="17.24" height="4.78" fill="#460f61"/><rect x="992.26" y="669.53" width="17.24" height="4.78" fill="#45075a"/><rect x="1009.20" y="669.53" width="17.24" height="4.78" fill="#450d60"/><rect x="1026.14" y="669.53" width="17.24" height="4.78" fill="#450a5d"/><rect x="1043.09" y="669.53" width="17.24" height="4.78" fill="#440558"/><rect x="1060.03" y="669.53" width="17.24" height="4.78" fill="#461062"/><rect x="1076.97" y="669.53" width="17.24" height="4.78" fill="#440355"/><rect x="1093.91" y="669.53" width="17.24" height="4.78" fill="#460f62"/><rect x="1110.86" y="669.53" width="17.24" height="4.78" fill="#440457"/><rect x="450.10" y="674.02" width="17.24" height="4.78" fill="#440154"/><rect x="467.04" y="674.02" width="17.24" height="4.78" fill="#440557"/><rect x="483.99" y="674.02" width="17.24" height="4.78" fill="#460e61"/><rect x="500.93" y="674.02" width="17.24" height="4.78" fill="#461264"/><rect x="517.87" y="674.02" width="17.24" height="4.78" fill="#440154"/><rect x="534.81" y="674.02" width="17.24" height="4.78" fill="#450a5c"/><rect x="551.75" y="674.02" width="17.24" height="4.78" fill="#450a5c"/><rect x="568.70" y="674.02" width="17.24" height="4.78" fill="#460f61"/><rect x="585.64" y="674.02" width="17.24" height="4.78" fill="#440457"/><rect x="602.58" y="674.02" width="17.24" height="4.78" fill="#450a5c"/><rect x="619.52" y="674.02" width="17.24" height="4.78" fill="#45075a"/><rect x="636.47" y="674.02" width="17.24" height="4.78" fill="#461062"/><rect x="653.41" y="674.02" width="17.24" height="4.78" fill="#450658"/><rect x="670.35" y="674.02" width="17.24" height="4.78" fill="#461264"/><rect x="687.30" y="674.02" width="17.24" height="4.78" fill="#450659"/><rect x="704.24" y="674.02" width="17.24" height="4.78" fill="#440558"/><rect x="721.18" y="674.02" width="17.24" height="4.78" fill="#450d60"/><rect x="738.12" y="674.02" width="17.24" height="4.78" fill="#450a5c"/><rect x="755.07" y="674.02" width="17.24" height="4.78" fill="#440356"/><rect x="772.01" y="674.02" width="17.24" height="4.78" fill="#450c5f"/><rect x="788.95" y="674.02" width="17.24" height="4.78" fill="#440255"/><rect x="805.89" y="674.02" width="17.24" height="4.78" fill="#460f61"/><rect x="822.84" y="674.02" width="17.24" height="4.78" fill="#450d60"/><rect x="839.78" y="674.02" width="17.24" height="4.78" fill="#460f61"/><rect x="856.72" y="674.02" width="17.24" height="4.78" fill="#450c5e"/><rect x="873.66" y="674.02" width="17.24" height="4.78" fill="#45075a"/><rect x="890.61" y="674.02" width="17.24" height="4.78" fill="#45085b"/><rect x="907.55" y="674.02" width="17.24" height="4.78" fill="#45085b"/><rect x="924.49" y="674.02" width="17.24" height="4.78" fill="#461163"/><rect x="941.43" y="674.02" width="17.24" height="4.78" fill="#440355"/><rect x="958.38" y="674.02" width="17.24" height="4.78" fill="#461163"/><rect x="975.32" y="674.02" width="17.24" height="4.78" fill="#440154"/><rect x="992.26" y="674.02" width="17.24" height="4.78" fill="#440557"/><rect x="1009.20" y="674.02" width="17.24" height="4.78" fill="#450658"/><rect x="1026.14" y="674.02" width="17.24" height="4.78" fill="#461163"/><rect x="1043.09" y="674.02" width="17.24" height="4.78" fill="#450a5c"/><rect x="1060.03" y="674.02" width="17.24" height="4.78" fill="#45085a"/><rect x="1076.97" y="674.02" width="17.24" height="4.78" fill="#461063"/><rect x="1093.91" y="674.02" width="17.24" height="4.78" fill="#440558"/><rect x="1110.86" y="674.02" width="17.24" height="4.78" fill="#45095c"/></g><line x1="425.1" y1="535.5" x2="428.5" y2="535.5" stroke="#a8a8a8" stroke-width="1"/><line x1="425.1" y1="558.5" x2="428.5" y2="558.5" stroke="#a8a8a8" stroke-width="1"/><line x1="425.1" y1="581.5" x2="428.5" y2="581.5" stroke="#a8a8a8" stroke-width="1"/><line x1="425.1" y1="604.5" x2="430.5" y2="604.5" stroke="#111" stroke-width="1"/><line x1="425.1" y1="627.5" x2="428.5" y2="627.5" stroke="#a8a8a8" stroke-width="1"/><line x1="425.1" y1="650.5" x2="428.5" y2="650.5" stroke="#a8a8a8" stroke-width="1"/><line x1="425.1" y1="673.5" x2="428.5" y2="673.5" stroke="#a8a8a8" stroke-width="1"/><line x1="449.5" y1="689.9" x2="449.5" y2="686.5" stroke="#a8a8a8" stroke-width="1"/><line x1="534.5" y1="689.9" x2="534.5" y2="686.5" stroke="#a8a8a8" stroke-width="1"/><line x1="619.5" y1="689.9" x2="619.5" y2="686.5" stroke="#a8a8a8" stroke-width="1"/><line x1="703.5" y1="689.9" x2="703.5" y2="686.5" stroke="#a8a8a8" stroke-width="1"/><line x1="788.5" y1="689.9" x2="788.5" y2="686.5" stroke="#a8a8a8" stroke-width="1"/><line x1="873.5" y1="689.9" x2="873.5" y2="686.5" stroke="#a8a8a8" stroke-width="1"/><line x1="958.5" y1="689.9" x2="958.5" y2="686.5" stroke="#a8a8a8" stroke-width="1"/><line x1="1042.5" y1="689.9" x2="1042.5" y2="686.5" stroke="#a8a8a8" stroke-width="1"/><line x1="1127.5" y1="689.9" x2="1127.5" y2="684.5" stroke="#111" stroke-width="1"/></svg>
<div style="left:380px;width:60px;text-align:right;top:269.51px;font:normal 14.5px/14.5px 'Liberation Sans', sans-serif;color:#111111;white-space:pre;-webkit-text-stroke:0.25px #111;">0</div>
<div style="left:380px;width:60px;text-align:right;top:243.51px;font:normal 14.5px/14.5px 'Liberation Sans', sans-serif;color:#111111;white-space:pre;-webkit-text-stroke:0.25px #111;">200</div>
<div style="left:380px;width:60px;text-align:right;top:218.51px;font:normal 14.5px/14.5px 'Liberation Sans', sans-serif;color:#111111;white-space:pre;-webkit-text-stroke:0.25px #111;">400</div>
<div style="left:380px;width:60px;text-align:right;top:193.51px;font:normal 14.5px/14.5px 'Liberation Sans', sans-serif;color:#111111;white-space:pre;-webkit-text-stroke:0.25px #111;">600</div>
<div style="left:380px;width:60px;text-align:right;top:167.51px;font:normal 14.5px/14.5px 'Liberation Sans', sans-serif;color:#111111;white-space:pre;-webkit-text-stroke:0.25px #111;">800</div>
<div style="left:380px;width:60px;text-align:right;top:142.51px;font:normal 14.5px/14.5px 'Liberation Sans', sans-serif;color:#111111;white-space:pre;-webkit-text-stroke:0.25px #111;">1000</div>
<div style="left:380px;width:60px;text-align:right;top:116.51px;font:normal 14.5px/14.5px 'Liberation Sans', sans-serif;color:#111111;white-space:pre;-webkit-text-stroke:0.25px #111;">1200</div>
<div style="left:451.5px;width:40px;text-align:center;top:291.91px;font:normal 14.5px/14.5px 'Liberation Sans', sans-serif;color:#111111;white-space:pre;-webkit-text-stroke:0.25px #111;">0.2</div>
<div style="left:535.375px;width:40px;text-align:center;top:291.91px;font:normal 14.5px/14.5px 'Liberation Sans', sans-serif;color:#111111;white-space:pre;-webkit-text-stroke:0.25px #111;">0.3</div>
<div style="left:619.25px;width:40px;text-align:center;top:291.91px;font:normal 14.5px/14.5px 'Liberation Sans', sans-serif;color:#111111;white-space:pre;-webkit-text-stroke:0.25px #111;">0.4</div>
<div style="left:703.125px;width:40px;text-align:center;top:291.91px;font:normal 14.5px/14.5px 'Liberation Sans', sans-serif;color:#111111;white-space:pre;-webkit-text-stroke:0.25px #111;">0.5</div>
<div style="left:787.0px;width:40px;text-align:center;top:291.91px;font:normal 14.5px/14.5px 'Liberation Sans', sans-serif;color:#111111;white-space:pre;-webkit-text-stroke:0.25px #111;">0.6</div>
<div style="left:870.875px;width:40px;text-align:center;top:291.91px;font:normal 14.5px/14.5px 'Liberation Sans', sans-serif;color:#111111;white-space:pre;-webkit-text-stroke:0.25px #111;">0.7</div>
<div style="left:954.75px;width:40px;text-align:center;top:291.91px;font:normal 14.5px/14.5px 'Liberation Sans', sans-serif;color:#111111;white-space:pre;-webkit-text-stroke:0.25px #111;">0.8</div>
<div style="left:1038.625px;width:40px;text-align:center;top:291.91px;font:normal 14.5px/14.5px 'Liberation Sans', sans-serif;color:#111111;white-space:pre;-webkit-text-stroke:0.25px #111;">0.9</div>
<div style="left:1122.5px;width:40px;text-align:center;top:291.91px;font:normal 14.5px/14.5px 'Liberation Sans', sans-serif;color:#111111;white-space:pre;-webkit-text-stroke:0.25px #111;">1</div>
<div style="left:333.6px;width:120px;text-align:center;top:192.71px;font:normal 14.5px/14.5px 'Liberation Sans', sans-serif;color:#111111;white-space:pre;transform:rotate(-90deg) scaleX(1.125);-webkit-text-stroke:0.25px #111;">Amplitude</div>
<div style="left:376.5px;width:60px;text-align:right;top:318.51px;font:normal 14.5px/14.5px 'Liberation Sans', sans-serif;color:#111111;white-space:pre;-webkit-text-stroke:0.25px #111;">π</div>
<div style="left:376.5px;width:60px;text-align:right;top:358.51px;font:normal 14.5px/14.5px 'Liberation Sans', sans-serif;color:#111111;white-space:pre;-webkit-text-stroke:0.25px #111;">π/2</div>
<div style="left:376.5px;width:60px;text-align:right;top:398.51px;font:normal 14.5px/14.5px 'Liberation Sans', sans-serif;color:#111111;white-space:pre;-webkit-text-stroke:0.25px #111;">0</div>
<div style="left:376.5px;width:60px;text-align:right;top:438.51px;font:normal 14.5px/14.5px 'Liberation Sans', sans-serif;color:#111111;white-space:pre;-webkit-text-stroke:0.25px #111;">-π/2</div>
<div style="left:376.5px;width:60px;text-align:right;top:479.51px;font:normal 14.5px/14.5px 'Liberation Sans', sans-serif;color:#111111;white-space:pre;-webkit-text-stroke:0.25px #111;">-π</div>
<div style="left:450.5px;width:40px;text-align:center;top:499.71px;font:normal 14.5px/14.5px 'Liberation Sans', sans-serif;color:#111111;white-space:pre;-webkit-text-stroke:0.25px #111;">0.2</div>
<div style="left:534.25px;width:40px;text-align:center;top:499.71px;font:normal 14.5px/14.5px 'Liberation Sans', sans-serif;color:#111111;white-space:pre;-webkit-text-stroke:0.25px #111;">0.3</div>
<div style="left:618.0px;width:40px;text-align:center;top:499.71px;font:normal 14.5px/14.5px 'Liberation Sans', sans-serif;color:#111111;white-space:pre;-webkit-text-stroke:0.25px #111;">0.4</div>
<div style="left:701.75px;width:40px;text-align:center;top:499.71px;font:normal 14.5px/14.5px 'Liberation Sans', sans-serif;color:#111111;white-space:pre;-webkit-text-stroke:0.25px #111;">0.5</div>
<div style="left:785.5px;width:40px;text-align:center;top:499.71px;font:normal 14.5px/14.5px 'Liberation Sans', sans-serif;color:#111111;white-space:pre;-webkit-text-stroke:0.25px #111;">0.6</div>
<div style="left:869.25px;width:40px;text-align:center;top:499.71px;font:normal 14.5px/14.5px 'Liberation Sans', sans-serif;color:#111111;white-space:pre;-webkit-text-stroke:0.25px #111;">0.7</div>
<div style="left:953.0px;width:40px;text-align:center;top:499.71px;font:normal 14.5px/14.5px 'Liberation Sans', sans-serif;color:#111111;white-space:pre;-webkit-text-stroke:0.25px #111;">0.8</div>
<div style="left:1036.75px;width:40px;text-align:center;top:499.71px;font:normal 14.5px/14.5px 'Liberation Sans', sans-serif;color:#111111;white-space:pre;-webkit-text-stroke:0.25px #111;">0.9</div>
<div style="left:1120.5px;width:40px;text-align:center;top:499.71px;font:normal 14.5px/14.5px 'Liberation Sans', sans-serif;color:#111111;white-space:pre;-webkit-text-stroke:0.25px #111;">1</div>
<div style="left:334.0px;width:120px;text-align:center;top:399.71px;font:normal 14.5px/14.5px 'Liberation Sans', sans-serif;color:#111111;white-space:pre;transform:rotate(-90deg);-webkit-text-stroke:0.25px #111;">Phase</div>
<div style="left:378.3px;width:40px;text-align:right;top:528.51px;font:normal 14.5px/14.5px 'Liberation Sans', sans-serif;color:#111111;white-space:pre;-webkit-text-stroke:0.25px #111;">3</div>
<div style="left:378.3px;width:40px;text-align:right;top:551.51px;font:normal 14.5px/14.5px 'Liberation Sans', sans-serif;color:#111111;white-space:pre;-webkit-text-stroke:0.25px #111;">2</div>
<div style="left:378.3px;width:40px;text-align:right;top:574.51px;font:normal 14.5px/14.5px 'Liberation Sans', sans-serif;color:#111111;white-space:pre;-webkit-text-stroke:0.25px #111;">1</div>
<div style="left:378.3px;width:40px;text-align:right;top:597.51px;font:normal 14.5px/14.5px 'Liberation Sans', sans-serif;color:#111111;white-space:pre;-webkit-text-stroke:0.25px #111;">0</div>
<div style="left:378.3px;width:40px;text-align:right;top:620.51px;font:normal 14.5px/14.5px 'Liberation Sans', sans-serif;color:#111111;white-space:pre;-webkit-text-stroke:0.25px #111;">-1</div>
<div style="left:378.3px;width:40px;text-align:right;top:643.51px;font:normal 14.5px/14.5px 'Liberation Sans', sans-serif;color:#111111;white-space:pre;-webkit-text-stroke:0.25px #111;">-2</div>
<div style="left:378.3px;width:40px;text-align:right;top:666.51px;font:normal 14.5px/14.5px 'Liberation Sans', sans-serif;color:#111111;white-space:pre;-webkit-text-stroke:0.25px #111;">-3</div>
<div style="left:429.6px;width:40px;text-align:center;top:693.81px;font:normal 14.5px/14.5px 'Liberation Sans', sans-serif;color:#111111;white-space:pre;-webkit-text-stroke:0.25px #111;">0.2</div>
<div style="left:514.34px;width:40px;text-align:center;top:693.81px;font:normal 14.5px/14.5px 'Liberation Sans', sans-serif;color:#111111;white-space:pre;-webkit-text-stroke:0.25px #111;">0.3</div>
<div style="left:599.08px;width:40px;text-align:center;top:693.81px;font:normal 14.5px/14.5px 'Liberation Sans', sans-serif;color:#111111;white-space:pre;-webkit-text-stroke:0.25px #111;">0.4</div>
<div style="left:683.8199999999999px;width:40px;text-align:center;top:693.81px;font:normal 14.5px/14.5px 'Liberation Sans', sans-serif;color:#111111;white-space:pre;-webkit-text-stroke:0.25px #111;">0.5</div>
<div style="left:768.56px;width:40px;text-align:center;top:693.81px;font:normal 14.5px/14.5px 'Liberation Sans', sans-serif;color:#111111;white-space:pre;-webkit-text-stroke:0.25px #111;">0.6</div>
<div style="left:853.3px;width:40px;text-align:center;top:693.81px;font:normal 14.5px/14.5px 'Liberation Sans', sans-serif;color:#111111;white-space:pre;-webkit-text-stroke:0.25px #111;">0.7</div>
<div style="left:938.04px;width:40px;text-align:center;top:693.81px;font:normal 14.5px/14.5px 'Liberation Sans', sans-serif;color:#111111;white-space:pre;-webkit-text-stroke:0.25px #111;">0.8</div>
<div style="left:1022.78px;width:40px;text-align:center;top:693.81px;font:normal 14.5px/14.5px 'Liberation Sans', sans-serif;color:#111111;white-space:pre;-webkit-text-stroke:0.25px #111;">0.9</div>
<div style="left:1107.52px;width:40px;text-align:center;top:693.81px;font:normal 14.5px/14.5px 'Liberation Sans', sans-serif;color:#111111;white-space:pre;-webkit-text-stroke:0.25px #111;">1</div>
<div style="left:716.8px;width:140px;text-align:center;top:714.51px;font:normal 14.5px/14.5px 'Liberation Sans', sans-serif;color:#111111;white-space:pre;transform:scaleX(1.04);-webkit-text-stroke:0.25px #111;">Distance (m)</div>
<div style="left:324.0px;width:140px;text-align:center;top:601.51px;font:normal 14.5px/14.5px 'Liberation Sans', sans-serif;color:#111111;white-space:pre;transform:rotate(-90deg) scaleX(1.10);-webkit-text-stroke:0.25px #111;">Velocity (m/s)</div>
</body></html>
